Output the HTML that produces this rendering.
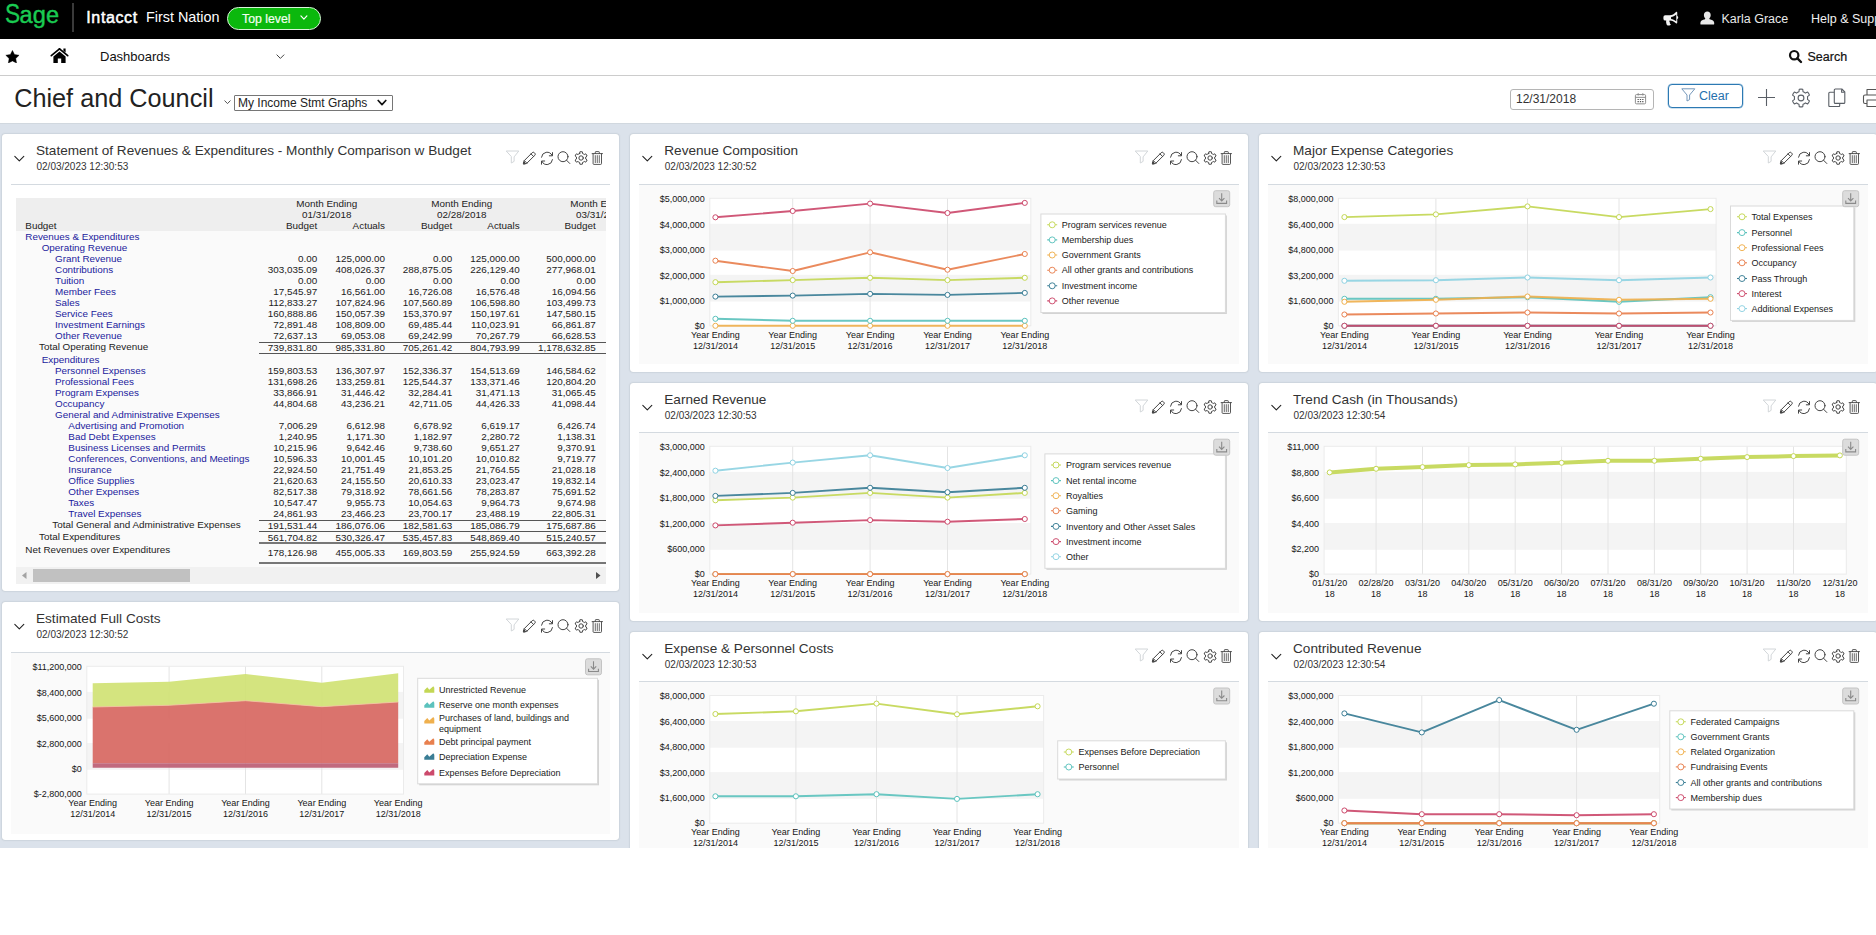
<!DOCTYPE html>
<html lang="en"><head><meta charset="utf-8"><title>Chief and Council - Dashboards</title>
<style>
*{box-sizing:border-box}
html,body{margin:0;padding:0}
body{width:1876px;height:935px;overflow:hidden;background:#fff;font-family:"Liberation Sans", Arial, sans-serif;color:#222;position:relative}
.abs{position:absolute}
#top{position:absolute;left:0;top:0;width:1876px;height:39px;background:#000;color:#fff}
#nav{position:absolute;left:0;top:39px;width:1876px;height:37px;background:#fff;border-bottom:1px solid #ccc}
#ttl{position:absolute;left:0;top:76px;width:1876px;height:47px;background:#fff}
#main{position:absolute;left:0;top:123px;width:1876px;height:725px;background:#dbe2eb;overflow:hidden;box-shadow:inset 0 1px 0 #d1d8df}
.panel{position:absolute;background:#fff;border-radius:3px;overflow:hidden;box-shadow:0 0 1.5px rgba(70,80,85,.42)}
.panel .chev{position:absolute;left:12px;top:21px}
.panel h3{position:absolute;left:34px;top:8.7px;margin:0;font-weight:400;font-size:13.6px;line-height:16px;color:#333;white-space:nowrap}
.panel .ts{position:absolute;left:34.5px;top:27px;font-size:10px;line-height:11px;color:#333;white-space:nowrap}
.panel .tools{position:absolute;right:14.3px;top:15.9px;width:99px;height:16px}
.panel .sep{position:absolute;left:9px;right:9px;top:50px;height:1px;background:#d4dae0}
.panel .body{position:absolute;left:9px;right:9px;top:51px;bottom:8px;background:#fafafa}
svg text{font-family:"Liberation Sans", Arial, sans-serif}
.tbl{position:absolute;font-size:9.9px;line-height:11px;color:#222;white-space:nowrap}
.tbl .r{position:absolute;left:0;height:11px;width:590px}
.tbl .l{position:absolute;top:0}
.tbl .v{position:absolute;top:0;text-align:right;width:80px}
.tbl a{color:#1b1b9d;text-decoration:none}
</style></head><body>
<div id="top">
<div class="abs" style="left:5px;top:-6.5px;height:40px;line-height:40px;color:#1acb52;white-space:nowrap"><span style="display:inline-block;font-size:27px;transform:scaleX(.84);transform-origin:0 50%;-webkit-text-stroke:.3px #1acb52">S</span><span style="font-size:23.5px;margin-left:-3.6px;letter-spacing:.25px;-webkit-text-stroke:.45px #1acb52">age</span></div>
<div class="abs" style="left:72px;top:3px;width:2px;height:29px;background:#3a3a3a"></div>
<div class="abs" style="left:86.3px;top:8px;font-size:16px;line-height:19px;font-weight:400;letter-spacing:.62px;-webkit-text-stroke:.5px #fff;color:#fff">Intacct</div>
<div class="abs" style="left:146px;top:9px;font-size:14.4px;line-height:17px;color:#fff">First Nation</div>
<div class="abs" style="left:227px;top:7px;width:94px;height:23px;border-radius:12px;background:#0bb80d;border:1px solid #d9f5d9"></div>
<div class="abs" style="left:242px;top:12px;font-size:12.3px;line-height:15px;color:#f2fff2;-webkit-text-stroke:.2px #f2fff2">Top level</div>
<svg class="abs" style="left:300.3px;top:14.6px" width="8" height="6" viewBox="0 0 8 6" fill="none" stroke="#fff" stroke-width="1.2" stroke-linecap="round" stroke-linejoin="round"><path d="M0.9 0.9L3.9 4.100L6.900 0.900"/></svg>
<svg class="abs" style="left:1662px;top:10.5px" width="18.4" height="16.2" viewBox="0 0 17 15" fill="#f2f2f2"><path d="M13.2 0.6c.5 0 .9.4.9.9v3.1a1.6 1.6 0 0 1 0 2.9v3.1c0 .5-.4.9-.9.9c-2-1.6-4-2.4-6-2.6c-.5.3-.6 1 .1 1.6c-.5.9.4 1.6.9 2c-.3.6-1.2.9-2 .9c-.7 0-1.3-.2-1.7-.5c-.4-1.2-1-2.4-.6-4.1H3a1.7 1.7 0 0 1-1.7-1.7V5.6A1.7 1.7 0 0 1 3 3.9h4.2c2-.2 4-1 6-3.3zM13.2 3.2c-1.600 1.300-3.200 2-4.800 2.300v1.800c1.600.3 3.200 1 4.800 2.300z" fill-rule="evenodd"/></svg>
<svg class="abs" style="left:1700px;top:11px" width="15" height="14" viewBox="0 0 15 14" fill="#e8e8e8"><path d="M7.300.4c2 0 3.400 1.500 3.400 3.500c0 1.300-.6 2.700-1.400 3.500c.1.700.6.9 1.300 1.200c1.700.6 3.400 1.200 3.600 3.200v1.200c0 .4-.3.600-.6.600H1c-.3 0-.6-.2-.6-.6v-1.200c.2-2 1.900-2.600 3.600-3.200c.7-.3 1.200-.5 1.300-1.200C4.500 6.600 3.900 5.200 3.900 3.900c0-2 1.400-3.500 3.400-3.500z"/></svg>
<div class="abs" style="left:1721.5px;top:11px;font-size:12.5px;line-height:16px;color:#e8e8e8">Karla Grace</div>
<div class="abs" style="left:1811px;top:11px;font-size:12.5px;line-height:16px;color:#f0f0f0;white-space:nowrap">Help &amp; Support</div>
</div>
<div id="nav">
<svg class="abs" style="left:5.4px;top:10.8px" width="14.9" height="13.6" viewBox="0 0 16 15"><path d="M8 .5l2.250 4.550l5.050.75l-3.650 3.550l.85 5L8 12L3.500 14.350l.85-5L.7 5.800l5.050-.75z" fill="#000" stroke="#000" stroke-width=".5" stroke-linejoin="round"/></svg>
<svg class="abs" style="left:50px;top:8px" width="19" height="17" viewBox="0 0 19 17"><path d="M9.500 1.800L1.300 8.600" stroke="#000" stroke-width="1.700" fill="none" stroke-linecap="round"/><path d="M9.500 1.800L17.700 8.600" stroke="#000" stroke-width="1.700" fill="none" stroke-linecap="round"/><path d="M9.500 4.600L3.400 9.600V16h4.400v-4.400h3.400V16h4.400V9.600z" fill="#000"/><path d="M13.400 1.400h2.200v4.200l-2.200-1.800z" fill="#000"/></svg>
<div class="abs" style="left:100px;top:10px;font-size:13px;line-height:16px;color:#111">Dashboards</div>
<svg class="abs" style="left:276px;top:15px" width="9" height="6" viewBox="0 0 9 6" fill="none" stroke="#444" stroke-width="1" stroke-linecap="round" stroke-linejoin="round"><path d="M0.9 0.9L4.400 4.400L7.900 0.900"/></svg>
<svg class="abs" style="left:1788px;top:10px" width="15" height="15" viewBox="0 0 15 15" fill="none" stroke="#111" stroke-width="2.2"><circle cx="6.2" cy="6.200" r="4.200"/><path d="M9.400 9.400L13 13" stroke-linecap="round" stroke-width="2.4"/></svg>
<div class="abs" style="left:1807.5px;top:10px;font-size:12.5px;line-height:16px;color:#111;-webkit-text-stroke:.2px #111">Search</div>
</div>
<div id="ttl">
<div class="abs" style="left:14.2px;top:7px;font-size:25.25px;line-height:30px;color:#222;white-space:nowrap">Chief and Council</div>
<svg class="abs" style="left:224.4px;top:24.3px" width="7" height="5" viewBox="0 0 7 5" fill="none" stroke="#555" stroke-width="1" stroke-linecap="round" stroke-linejoin="round"><path d="M0.8 0.8L3.5 3.600L6.200 0.800"/></svg>
<div class="abs" style="left:234px;top:19px;width:159px;height:16px;border:1px solid #767676;background:#fff;border-radius:1px"></div>
<div class="abs" style="left:238px;top:20px;font-size:12px;line-height:14px;color:#222;white-space:nowrap">My Income Stmt Graphs</div>
<svg class="abs" style="left:377px;top:23px" width="10" height="8" viewBox="0 0 10 8" fill="none" stroke="#111" stroke-width="1.700" stroke-linecap="round" stroke-linejoin="round"><path d="M1.200 1.500L5 5.600L8.800 1.500"/></svg>
<div class="abs" style="left:1510px;top:13px;width:144px;height:21px;border:1px solid #b5b5b5;border-radius:3px;background:#fff"></div>
<div class="abs" style="left:1516px;top:16px;font-size:12px;line-height:15px;color:#333">12/31/2018</div>
<svg class="abs" style="left:1634.3px;top:16px" width="13" height="13.5" viewBox="0 0 14 14" fill="none" stroke="#8b8b8b" stroke-width="1.05"><rect x="1.500" y="2.500" width="11" height="10" rx="1.200"/><path d="M1.500 5.500H12.500M4.500 1V3.500M9.500 1V3.500"/><path d="M3.800 7.800h1.400M6.300 7.800h1.400M8.800 7.800h1.400M3.800 10.200h1.400M6.300 10.200h1.400M8.800 10.200h1.400" stroke-width="1.300" stroke="#555"/></svg>
<div class="abs" style="left:1668px;top:8px;width:75px;height:24px;border:1px solid #2c79b3;border-radius:4px;background:#fff;box-shadow:0 0 0 .5px #9cc3df"></div>
<svg class="abs" style="left:1681px;top:12px" width="15" height="14" viewBox="0 0 15 14" fill="none" stroke="#7497ba" stroke-width="1" stroke-linejoin="round"><path d="M0.800 0.800H13.800L8.600 7V11.600L6 13V7Z"/></svg>
<div class="abs" style="left:1699px;top:13px;font-size:12.500px;line-height:15px;color:#2470ad">Clear</div>
<svg class="abs" style="left:1757px;top:12.3px" width="19" height="19" viewBox="0 0 19 19" stroke="#5a5f66" stroke-width="1.100"><path d="M9.500 1V18M1 9.500H18"/></svg>
<svg class="abs" style="left:1791.3px;top:11.9px" width="20" height="20" viewBox="-10 -10 20 20" fill="none" stroke="#5a5f66" stroke-width="1.100" stroke-linejoin="round"><path d="M-2.04 -6.28L-1.76 -8.72A8.9 8.9 0 0 1 1.76 -8.72L2.04 -6.28A6.6 6.6 0 0 1 4.42 -4.90L4.42 -4.90L6.68 -5.89A8.9 8.9 0 0 1 8.44 -2.84L6.46 -1.37A6.6 6.6 0 0 1 6.46 1.37L6.46 1.37L8.44 2.84A8.9 8.9 0 0 1 6.68 5.89L4.42 4.90A6.6 6.6 0 0 1 2.04 6.28L2.04 6.28L1.76 8.72A8.9 8.9 0 0 1 -1.76 8.72L-2.04 6.28A6.6 6.6 0 0 1 -4.42 4.90L-4.42 4.90L-6.68 5.89A8.9 8.9 0 0 1 -8.44 2.84L-6.46 1.37A6.6 6.6 0 0 1 -6.46 -1.37L-6.46 -1.37L-8.44 -2.84A8.9 8.9 0 0 1 -6.68 -5.89L-4.42 -4.90A6.6 6.6 0 0 1 -2.04 -6.28Z"/><circle cx="0" cy="0" r="2.9"/></svg>
<svg class="abs" style="left:1827px;top:11px" width="19" height="20" viewBox="0 0 19 20" fill="none" stroke="#5a5f66" stroke-width="1.100" stroke-linejoin="round"><path d="M7.300 5V15.400a1 1 0 0 0 1 1H16.800a1 1 0 0 0 1-1V5L14.800 2H8.300a1 1 0 0 0-1 1Z"/><path d="M14.600 2.200V5.200H17.600"/><path d="M7.300 5.200H2.800a1 1 0 0 0-1 1V18.600a1 1 0 0 0 1 1H11.700a1 1 0 0 0 1-1V16.600"/></svg>
<svg class="abs" style="left:1862px;top:12px" width="20" height="20" viewBox="0 0 20 20" fill="none" stroke="#555" stroke-width="1.100" stroke-linejoin="round"><path d="M5 7V1.500H17V7"/><rect x="1.500" y="7" width="19" height="8.500" rx="1.500"/><rect x="5" y="12" width="12" height="6.500" fill="#fff"/></svg>
</div>
<div id="main">
<div class="panel" style="left:2px;top:11px;width:617.3px;height:457px"><svg class="chev" width="11" height="7" viewBox="0 0 11 7" fill="none" stroke="#222" stroke-width="1.1" stroke-linecap="round" stroke-linejoin="round"><path d="M0.800 1.400L5.300 5.900L9.800 1.400"/></svg><h3>Statement of Revenues &amp; Expenditures - Monthly Comparison w Budget</h3><div class="ts">02/03/2023 12:30:53</div><svg class="tools" viewBox="0 0 99 16" width="99" height="16" fill="none" stroke="#444" stroke-width="1" stroke-linecap="round" stroke-linejoin="round"><path d="M0.6 1H12.8L8.1 6.9V11.4L5.3 13V6.9Z" stroke="#d2d6d9"/><g transform="translate(17,1.5)"><path d="M0.7 12.3L1.3 9.1L9.2 1.2a1.5 1.5 0 0 1 2.1 0l0.5 0.5a1.5 1.5 0 0 1 0 2.1L3.9 11.7Z"/><path d="M1.3 9.1L3.9 11.7M8 2.4L10.600 5" /><path d="M0.7 12.3L2.5 12L1 10.500Z" fill="#444"/></g><g transform="translate(34.5,2)"><path d="M1 5.2A5.600 5.600 0 0 1 11.600 3.400"/><path d="M12 0.600V3.800H8.800"/><path d="M12 7.600A5.600 5.600 0 0 1 1.400 9.400"/><path d="M1 12.200V9H4.200"/></g><g transform="translate(51.3,1)"><circle cx="5.700" cy="5.700" r="5"/><path d="M9.300 9.300L12.500 12.500"/></g><g transform="translate(75.1,8)"><path d="M-1.45 -4.47L-1.25 -6.18A6.3 6.3 0 0 1 1.25 -6.18L1.45 -4.47A4.7 4.7 0 0 1 3.14 -3.49L3.14 -3.49L4.73 -4.17A6.3 6.3 0 0 1 5.97 -2.01L4.60 -0.98A4.7 4.7 0 0 1 4.60 0.98L4.60 0.98L5.97 2.01A6.3 6.3 0 0 1 4.73 4.17L3.14 3.49A4.7 4.7 0 0 1 1.45 4.47L1.45 4.47L1.25 6.18A6.3 6.3 0 0 1 -1.25 6.18L-1.45 4.47A4.7 4.7 0 0 1 -3.14 3.49L-3.14 3.49L-4.73 4.17A6.3 6.3 0 0 1 -5.97 2.01L-4.60 0.98A4.7 4.7 0 0 1 -4.60 -0.98L-4.60 -0.98L-5.97 -2.01A6.3 6.3 0 0 1 -4.73 -4.17L-3.14 -3.49A4.7 4.7 0 0 1 -1.45 -4.47Z"/><circle cx="0" cy="0" r="2.2"/></g><g transform="translate(85.7,1)" stroke-width="0.9"><path d="M0.400 2.600H10.800M3.600 2.400V1.200a0.600 0.600 0 0 1 .6-.6H7a0.600 0.600 0 0 1 .6 .6V2.400"/><path d="M1.400 2.800V12.600a0.800 0.800 0 0 0 .8 .8H9a0.800 0.800 0 0 0 .8-.8V2.800"/><path d="M3.600 4.600V11.600M5.600 4.600V11.600M7.600 4.600V11.600" stroke-width="0.8"/></g></svg><div class="sep" style="top:50px"></div><div class="tbl" style="left:14px;top:64px;width:590px;height:369px;background:#fafafa;overflow:hidden"><div class="abs" style="left:0;top:0;width:590px;height:33px;background:#eee"></div><div class="abs" style="top:-0.5px;left:270.7px;width:80px;text-align:center;height:11px">Month Ending</div><div class="abs" style="top:10.5px;left:270.7px;width:80px;text-align:center;height:11px">01/31/2018</div><div class="abs" style="top:-0.5px;left:405.7px;width:80px;text-align:center;height:11px">Month Ending</div><div class="abs" style="top:10.5px;left:405.7px;width:80px;text-align:center;height:11px">02/28/2018</div><div class="abs" style="top:-0.5px;left:554.3px;height:11px">Month Ending</div><div class="abs" style="top:10.5px;left:560.0px;height:11px">03/31/2018</div><div class="abs" style="top:21.5px;left:9.3px;height:11px">Budget</div><div class="abs" style="top:21.5px;left:221.3px;width:80px;text-align:right;height:11px">Budget</div><div class="abs" style="top:21.5px;left:289.0px;width:80px;text-align:right;height:11px">Actuals</div><div class="abs" style="top:21.5px;left:356.3px;width:80px;text-align:right;height:11px">Budget</div><div class="abs" style="top:21.5px;left:423.7px;width:80px;text-align:right;height:11px">Actuals</div><div class="abs" style="top:21.5px;left:499.7px;width:80px;text-align:right;height:11px">Budget</div><div class="abs" style="top:32.8px;left:9.3px;height:11px"><a>Revenues &amp; Expenditures</a></div><div class="abs" style="top:43.8px;left:25.7px;height:11px"><a>Operating Revenue</a></div><div class="abs" style="top:54.8px;left:39.0px;height:11px"><a>Grant Revenue</a></div><div class="abs" style="top:54.8px;left:221.3px;width:80px;text-align:right;height:11px">0.00</div><div class="abs" style="top:54.8px;left:289.0px;width:80px;text-align:right;height:11px">125,000.00</div><div class="abs" style="top:54.8px;left:356.3px;width:80px;text-align:right;height:11px">0.00</div><div class="abs" style="top:54.8px;left:423.7px;width:80px;text-align:right;height:11px">125,000.00</div><div class="abs" style="top:54.8px;left:499.7px;width:80px;text-align:right;height:11px">500,000.00</div><div class="abs" style="top:65.8px;left:39.0px;height:11px"><a>Contributions</a></div><div class="abs" style="top:65.8px;left:221.3px;width:80px;text-align:right;height:11px">303,035.09</div><div class="abs" style="top:65.8px;left:289.0px;width:80px;text-align:right;height:11px">408,026.37</div><div class="abs" style="top:65.8px;left:356.3px;width:80px;text-align:right;height:11px">288,875.05</div><div class="abs" style="top:65.8px;left:423.7px;width:80px;text-align:right;height:11px">226,129.40</div><div class="abs" style="top:65.8px;left:499.7px;width:80px;text-align:right;height:11px">277,968.01</div><div class="abs" style="top:76.8px;left:39.0px;height:11px"><a>Tuition</a></div><div class="abs" style="top:76.8px;left:221.3px;width:80px;text-align:right;height:11px">0.00</div><div class="abs" style="top:76.8px;left:289.0px;width:80px;text-align:right;height:11px">0.00</div><div class="abs" style="top:76.8px;left:356.3px;width:80px;text-align:right;height:11px">0.00</div><div class="abs" style="top:76.8px;left:423.7px;width:80px;text-align:right;height:11px">0.00</div><div class="abs" style="top:76.8px;left:499.7px;width:80px;text-align:right;height:11px">0.00</div><div class="abs" style="top:87.8px;left:39.0px;height:11px"><a>Member Fees</a></div><div class="abs" style="top:87.8px;left:221.3px;width:80px;text-align:right;height:11px">17,545.97</div><div class="abs" style="top:87.8px;left:289.0px;width:80px;text-align:right;height:11px">16,561.00</div><div class="abs" style="top:87.8px;left:356.3px;width:80px;text-align:right;height:11px">16,726.08</div><div class="abs" style="top:87.8px;left:423.7px;width:80px;text-align:right;height:11px">16,576.48</div><div class="abs" style="top:87.8px;left:499.7px;width:80px;text-align:right;height:11px">16,094.56</div><div class="abs" style="top:98.8px;left:39.0px;height:11px"><a>Sales</a></div><div class="abs" style="top:98.8px;left:221.3px;width:80px;text-align:right;height:11px">112,833.27</div><div class="abs" style="top:98.8px;left:289.0px;width:80px;text-align:right;height:11px">107,824.96</div><div class="abs" style="top:98.8px;left:356.3px;width:80px;text-align:right;height:11px">107,560.89</div><div class="abs" style="top:98.8px;left:423.7px;width:80px;text-align:right;height:11px">106,598.80</div><div class="abs" style="top:98.8px;left:499.7px;width:80px;text-align:right;height:11px">103,499.73</div><div class="abs" style="top:109.8px;left:39.0px;height:11px"><a>Service Fees</a></div><div class="abs" style="top:109.8px;left:221.3px;width:80px;text-align:right;height:11px">160,888.86</div><div class="abs" style="top:109.8px;left:289.0px;width:80px;text-align:right;height:11px">150,057.39</div><div class="abs" style="top:109.8px;left:356.3px;width:80px;text-align:right;height:11px">153,370.97</div><div class="abs" style="top:109.8px;left:423.7px;width:80px;text-align:right;height:11px">150,197.61</div><div class="abs" style="top:109.8px;left:499.7px;width:80px;text-align:right;height:11px">147,580.15</div><div class="abs" style="top:120.8px;left:39.0px;height:11px"><a>Investment Earnings</a></div><div class="abs" style="top:120.8px;left:221.3px;width:80px;text-align:right;height:11px">72,891.48</div><div class="abs" style="top:120.8px;left:289.0px;width:80px;text-align:right;height:11px">108,809.00</div><div class="abs" style="top:120.8px;left:356.3px;width:80px;text-align:right;height:11px">69,485.44</div><div class="abs" style="top:120.8px;left:423.7px;width:80px;text-align:right;height:11px">110,023.91</div><div class="abs" style="top:120.8px;left:499.7px;width:80px;text-align:right;height:11px">66,861.87</div><div class="abs" style="top:131.8px;left:39.0px;height:11px"><a>Other Revenue</a></div><div class="abs" style="top:131.8px;left:221.3px;width:80px;text-align:right;height:11px">72,637.13</div><div class="abs" style="top:131.8px;left:289.0px;width:80px;text-align:right;height:11px">69,053.08</div><div class="abs" style="top:131.8px;left:356.3px;width:80px;text-align:right;height:11px">69,242.99</div><div class="abs" style="top:131.8px;left:423.7px;width:80px;text-align:right;height:11px">70,267.79</div><div class="abs" style="top:131.8px;left:499.7px;width:80px;text-align:right;height:11px">66,628.53</div><div class="abs" style="top:142.8px;left:23.0px;height:11px">Total Operating Revenue</div><div class="abs" style="top:143.5px;left:221.3px;width:80px;text-align:right;height:11px">739,831.80</div><div class="abs" style="top:143.5px;left:289.0px;width:80px;text-align:right;height:11px">985,331.80</div><div class="abs" style="top:143.5px;left:356.3px;width:80px;text-align:right;height:11px">705,261.42</div><div class="abs" style="top:143.5px;left:423.7px;width:80px;text-align:right;height:11px">804,793.99</div><div class="abs" style="top:143.5px;left:499.7px;width:80px;text-align:right;height:11px">1,178,632.85</div><div class="abs" style="top:155.8px;left:25.7px;height:11px"><a>Expenditures</a></div><div class="abs" style="top:166.8px;left:39.0px;height:11px"><a>Personnel Expenses</a></div><div class="abs" style="top:166.8px;left:221.3px;width:80px;text-align:right;height:11px">159,803.53</div><div class="abs" style="top:166.8px;left:289.0px;width:80px;text-align:right;height:11px">136,307.97</div><div class="abs" style="top:166.8px;left:356.3px;width:80px;text-align:right;height:11px">152,336.37</div><div class="abs" style="top:166.8px;left:423.7px;width:80px;text-align:right;height:11px">154,513.69</div><div class="abs" style="top:166.8px;left:499.7px;width:80px;text-align:right;height:11px">146,584.62</div><div class="abs" style="top:177.8px;left:39.0px;height:11px"><a>Professional Fees</a></div><div class="abs" style="top:177.8px;left:221.3px;width:80px;text-align:right;height:11px">131,698.26</div><div class="abs" style="top:177.8px;left:289.0px;width:80px;text-align:right;height:11px">133,259.81</div><div class="abs" style="top:177.8px;left:356.3px;width:80px;text-align:right;height:11px">125,544.37</div><div class="abs" style="top:177.8px;left:423.7px;width:80px;text-align:right;height:11px">133,371.46</div><div class="abs" style="top:177.8px;left:499.7px;width:80px;text-align:right;height:11px">120,804.20</div><div class="abs" style="top:188.8px;left:39.0px;height:11px"><a>Program Expenses</a></div><div class="abs" style="top:188.8px;left:221.3px;width:80px;text-align:right;height:11px">33,866.91</div><div class="abs" style="top:188.8px;left:289.0px;width:80px;text-align:right;height:11px">31,446.42</div><div class="abs" style="top:188.8px;left:356.3px;width:80px;text-align:right;height:11px">32,284.41</div><div class="abs" style="top:188.8px;left:423.7px;width:80px;text-align:right;height:11px">31,471.13</div><div class="abs" style="top:188.8px;left:499.7px;width:80px;text-align:right;height:11px">31,065.45</div><div class="abs" style="top:199.8px;left:39.0px;height:11px"><a>Occupancy</a></div><div class="abs" style="top:199.8px;left:221.3px;width:80px;text-align:right;height:11px">44,804.68</div><div class="abs" style="top:199.8px;left:289.0px;width:80px;text-align:right;height:11px">43,236.21</div><div class="abs" style="top:199.8px;left:356.3px;width:80px;text-align:right;height:11px">42,711.05</div><div class="abs" style="top:199.8px;left:423.7px;width:80px;text-align:right;height:11px">44,426.33</div><div class="abs" style="top:199.8px;left:499.7px;width:80px;text-align:right;height:11px">41,098.44</div><div class="abs" style="top:210.8px;left:39.0px;height:11px"><a>General and Administrative Expenses</a></div><div class="abs" style="top:221.8px;left:52.3px;height:11px"><a>Advertising and Promotion</a></div><div class="abs" style="top:221.8px;left:221.3px;width:80px;text-align:right;height:11px">7,006.29</div><div class="abs" style="top:221.8px;left:289.0px;width:80px;text-align:right;height:11px">6,612.98</div><div class="abs" style="top:221.8px;left:356.3px;width:80px;text-align:right;height:11px">6,678.92</div><div class="abs" style="top:221.8px;left:423.7px;width:80px;text-align:right;height:11px">6,619.17</div><div class="abs" style="top:221.8px;left:499.7px;width:80px;text-align:right;height:11px">6,426.74</div><div class="abs" style="top:232.8px;left:52.3px;height:11px"><a>Bad Debt Expenses</a></div><div class="abs" style="top:232.8px;left:221.3px;width:80px;text-align:right;height:11px">1,240.95</div><div class="abs" style="top:232.8px;left:289.0px;width:80px;text-align:right;height:11px">1,171.30</div><div class="abs" style="top:232.8px;left:356.3px;width:80px;text-align:right;height:11px">1,182.97</div><div class="abs" style="top:232.8px;left:423.7px;width:80px;text-align:right;height:11px">2,280.72</div><div class="abs" style="top:232.8px;left:499.7px;width:80px;text-align:right;height:11px">1,138.31</div><div class="abs" style="top:243.8px;left:52.3px;height:11px"><a>Business Licenses and Permits</a></div><div class="abs" style="top:243.8px;left:221.3px;width:80px;text-align:right;height:11px">10,215.96</div><div class="abs" style="top:243.8px;left:289.0px;width:80px;text-align:right;height:11px">9,642.46</div><div class="abs" style="top:243.8px;left:356.3px;width:80px;text-align:right;height:11px">9,738.60</div><div class="abs" style="top:243.8px;left:423.7px;width:80px;text-align:right;height:11px">9,651.27</div><div class="abs" style="top:243.8px;left:499.7px;width:80px;text-align:right;height:11px">9,370.91</div><div class="abs" style="top:254.8px;left:52.3px;height:11px"><a>Conferences, Conventions, and Meetings</a></div><div class="abs" style="top:254.8px;left:221.3px;width:80px;text-align:right;height:11px">10,596.33</div><div class="abs" style="top:254.8px;left:289.0px;width:80px;text-align:right;height:11px">10,001.45</div><div class="abs" style="top:254.8px;left:356.3px;width:80px;text-align:right;height:11px">10,101.20</div><div class="abs" style="top:254.8px;left:423.7px;width:80px;text-align:right;height:11px">10,010.82</div><div class="abs" style="top:254.8px;left:499.7px;width:80px;text-align:right;height:11px">9,719.77</div><div class="abs" style="top:265.8px;left:52.3px;height:11px"><a>Insurance</a></div><div class="abs" style="top:265.8px;left:221.3px;width:80px;text-align:right;height:11px">22,924.50</div><div class="abs" style="top:265.8px;left:289.0px;width:80px;text-align:right;height:11px">21,751.49</div><div class="abs" style="top:265.8px;left:356.3px;width:80px;text-align:right;height:11px">21,853.25</div><div class="abs" style="top:265.8px;left:423.7px;width:80px;text-align:right;height:11px">21,764.55</div><div class="abs" style="top:265.8px;left:499.7px;width:80px;text-align:right;height:11px">21,028.18</div><div class="abs" style="top:276.8px;left:52.3px;height:11px"><a>Office Supplies</a></div><div class="abs" style="top:276.8px;left:221.3px;width:80px;text-align:right;height:11px">21,620.63</div><div class="abs" style="top:276.8px;left:289.0px;width:80px;text-align:right;height:11px">24,155.50</div><div class="abs" style="top:276.8px;left:356.3px;width:80px;text-align:right;height:11px">20,610.33</div><div class="abs" style="top:276.8px;left:423.7px;width:80px;text-align:right;height:11px">23,023.47</div><div class="abs" style="top:276.8px;left:499.7px;width:80px;text-align:right;height:11px">19,832.14</div><div class="abs" style="top:287.8px;left:52.3px;height:11px"><a>Other Expenses</a></div><div class="abs" style="top:287.8px;left:221.3px;width:80px;text-align:right;height:11px">82,517.38</div><div class="abs" style="top:287.8px;left:289.0px;width:80px;text-align:right;height:11px">79,318.92</div><div class="abs" style="top:287.8px;left:356.3px;width:80px;text-align:right;height:11px">78,661.56</div><div class="abs" style="top:287.8px;left:423.7px;width:80px;text-align:right;height:11px">78,283.87</div><div class="abs" style="top:287.8px;left:499.7px;width:80px;text-align:right;height:11px">75,691.52</div><div class="abs" style="top:298.8px;left:52.3px;height:11px"><a>Taxes</a></div><div class="abs" style="top:298.8px;left:221.3px;width:80px;text-align:right;height:11px">10,547.47</div><div class="abs" style="top:298.8px;left:289.0px;width:80px;text-align:right;height:11px">9,955.73</div><div class="abs" style="top:298.8px;left:356.3px;width:80px;text-align:right;height:11px">10,054.63</div><div class="abs" style="top:298.8px;left:423.7px;width:80px;text-align:right;height:11px">9,964.73</div><div class="abs" style="top:298.8px;left:499.7px;width:80px;text-align:right;height:11px">9,674.98</div><div class="abs" style="top:309.8px;left:52.3px;height:11px"><a>Travel Expenses</a></div><div class="abs" style="top:309.8px;left:221.3px;width:80px;text-align:right;height:11px">24,861.93</div><div class="abs" style="top:309.8px;left:289.0px;width:80px;text-align:right;height:11px">23,466.23</div><div class="abs" style="top:309.8px;left:356.3px;width:80px;text-align:right;height:11px">23,700.17</div><div class="abs" style="top:309.8px;left:423.7px;width:80px;text-align:right;height:11px">23,488.19</div><div class="abs" style="top:309.8px;left:499.7px;width:80px;text-align:right;height:11px">22,805.31</div><div class="abs" style="top:320.8px;left:36.3px;height:11px">Total General and Administrative Expenses</div><div class="abs" style="top:321.5px;left:221.3px;width:80px;text-align:right;height:11px">191,531.44</div><div class="abs" style="top:321.5px;left:289.0px;width:80px;text-align:right;height:11px">186,076.06</div><div class="abs" style="top:321.5px;left:356.3px;width:80px;text-align:right;height:11px">182,581.63</div><div class="abs" style="top:321.5px;left:423.7px;width:80px;text-align:right;height:11px">185,086.79</div><div class="abs" style="top:321.5px;left:499.7px;width:80px;text-align:right;height:11px">175,687.86</div><div class="abs" style="top:332.8px;left:23.0px;height:11px">Total Expenditures</div><div class="abs" style="top:333.8px;left:221.3px;width:80px;text-align:right;height:11px">561,704.82</div><div class="abs" style="top:333.8px;left:289.0px;width:80px;text-align:right;height:11px">530,326.47</div><div class="abs" style="top:333.8px;left:356.3px;width:80px;text-align:right;height:11px">535,457.83</div><div class="abs" style="top:333.8px;left:423.7px;width:80px;text-align:right;height:11px">548,869.40</div><div class="abs" style="top:333.8px;left:499.7px;width:80px;text-align:right;height:11px">515,240.57</div><div class="abs" style="top:345.8px;left:9.3px;height:11px">Net Revenues over Expenditures</div><div class="abs" style="top:349.0px;left:221.3px;width:80px;text-align:right;height:11px">178,126.98</div><div class="abs" style="top:349.0px;left:289.0px;width:80px;text-align:right;height:11px">455,005.33</div><div class="abs" style="top:349.0px;left:356.3px;width:80px;text-align:right;height:11px">169,803.59</div><div class="abs" style="top:349.0px;left:423.7px;width:80px;text-align:right;height:11px">255,924.59</div><div class="abs" style="top:349.0px;left:499.7px;width:80px;text-align:right;height:11px">663,392.28</div><div class="abs" style="left:243.3px;top:144.0px;width:347px;height:1px;background:#555"></div><div class="abs" style="left:243.3px;top:155.0px;width:347px;height:1px;background:#555"></div><div class="abs" style="left:243.3px;top:322.0px;width:347px;height:1px;background:#555"></div><div class="abs" style="left:243.3px;top:333.0px;width:347px;height:1px;background:#555"></div><div class="abs" style="left:243.3px;top:344.4px;width:347px;height:1.8px;background:#777"></div><div class="abs" style="left:243.3px;top:364.0px;width:347px;height:1.8px;background:#777"></div></div><div class="abs" style="left:14px;top:433px;width:590px;height:17px;background:#f1f1f1"><div class="abs" style="left:17px;top:2px;width:157px;height:13px;background:#c1c1c1"></div><svg class="abs" style="left:0;top:0" width="590" height="17"><path d="M10.5 5V12L6 8.5Z" fill="#a3a3a3"/><path d="M580 5V12L584.5 8.5Z" fill="#505050"/></svg></div></div>
<div class="panel" style="left:2px;top:479px;width:617.3px;height:237.5px"><svg class="chev" width="11" height="7" viewBox="0 0 11 7" fill="none" stroke="#222" stroke-width="1.1" stroke-linecap="round" stroke-linejoin="round"><path d="M0.800 1.400L5.300 5.900L9.800 1.400"/></svg><h3>Estimated Full Costs</h3><div class="ts">02/03/2023 12:30:52</div><svg class="tools" viewBox="0 0 99 16" width="99" height="16" fill="none" stroke="#444" stroke-width="1" stroke-linecap="round" stroke-linejoin="round"><path d="M0.6 1H12.8L8.1 6.9V11.4L5.3 13V6.9Z" stroke="#d2d6d9"/><g transform="translate(17,1.5)"><path d="M0.7 12.3L1.3 9.1L9.2 1.2a1.5 1.5 0 0 1 2.1 0l0.5 0.5a1.5 1.5 0 0 1 0 2.1L3.9 11.7Z"/><path d="M1.3 9.1L3.9 11.7M8 2.4L10.600 5" /><path d="M0.7 12.3L2.5 12L1 10.500Z" fill="#444"/></g><g transform="translate(34.5,2)"><path d="M1 5.2A5.600 5.600 0 0 1 11.600 3.400"/><path d="M12 0.600V3.800H8.800"/><path d="M12 7.600A5.600 5.600 0 0 1 1.400 9.400"/><path d="M1 12.200V9H4.200"/></g><g transform="translate(51.3,1)"><circle cx="5.700" cy="5.700" r="5"/><path d="M9.300 9.300L12.500 12.500"/></g><g transform="translate(75.1,8)"><path d="M-1.45 -4.47L-1.25 -6.18A6.3 6.3 0 0 1 1.25 -6.18L1.45 -4.47A4.7 4.7 0 0 1 3.14 -3.49L3.14 -3.49L4.73 -4.17A6.3 6.3 0 0 1 5.97 -2.01L4.60 -0.98A4.7 4.7 0 0 1 4.60 0.98L4.60 0.98L5.97 2.01A6.3 6.3 0 0 1 4.73 4.17L3.14 3.49A4.7 4.7 0 0 1 1.45 4.47L1.45 4.47L1.25 6.18A6.3 6.3 0 0 1 -1.25 6.18L-1.45 4.47A4.7 4.7 0 0 1 -3.14 3.49L-3.14 3.49L-4.73 4.17A6.3 6.3 0 0 1 -5.97 2.01L-4.60 0.98A4.7 4.7 0 0 1 -4.60 -0.98L-4.60 -0.98L-5.97 -2.01A6.3 6.3 0 0 1 -4.73 -4.17L-3.14 -3.49A4.7 4.7 0 0 1 -1.45 -4.47Z"/><circle cx="0" cy="0" r="2.2"/></g><g transform="translate(85.7,1)" stroke-width="0.9"><path d="M0.400 2.600H10.800M3.600 2.400V1.200a0.600 0.600 0 0 1 .6-.6H7a0.600 0.600 0 0 1 .6 .6V2.400"/><path d="M1.400 2.800V12.600a0.800 0.800 0 0 0 .8 .8H9a0.800 0.800 0 0 0 .8-.8V2.800"/><path d="M3.600 4.600V11.600M5.600 4.600V11.600M7.600 4.600V11.600" stroke-width="0.8"/></g></svg><div class="sep" style="top:50px"></div><div class="body" style="top:51px;bottom:5.5px"></div><svg class="abs" style="left:0;top:0" width="617" height="239" viewBox="0 0 617 239"><rect x="84.8" y="64.3" width="316.7" height="127.8" fill="#fff"/><rect x="84.8" y="89.9" width="316.7" height="26.8" fill="#f4f4f4"/><rect x="84.8" y="141.0" width="316.7" height="26.8" fill="#f4f4f4"/><line x1="167.1" y1="64.3" x2="167.1" y2="192.1" stroke="#e4e4e4" stroke-width="1"/><line x1="243.5" y1="64.3" x2="243.5" y2="192.1" stroke="#e4e4e4" stroke-width="1"/><line x1="319.8" y1="64.3" x2="319.8" y2="192.1" stroke="#e4e4e4" stroke-width="1"/><rect x="84.8" y="64.3" width="316.7" height="127.8" fill="none" stroke="#ebebeb" stroke-width="1"/><text x="79.8" y="68.0" font-size="9" text-anchor="end" fill="#161616">$11,200,000</text><text x="79.8" y="94.0" font-size="9" text-anchor="end" fill="#161616">$8,400,000</text><text x="79.8" y="119.0" font-size="9" text-anchor="end" fill="#161616">$5,600,000</text><text x="79.8" y="145.0" font-size="9" text-anchor="end" fill="#161616">$2,800,000</text><text x="79.8" y="170.0" font-size="9" text-anchor="end" fill="#161616">$0</text><text x="79.8" y="195.0" font-size="9" text-anchor="end" fill="#161616">$-2,800,000</text><text x="90.7" y="204.0" font-size="9" text-anchor="middle" fill="#161616">Year Ending</text><text x="90.7" y="215.0" font-size="9" text-anchor="middle" fill="#161616">12/31/2014</text><text x="167.1" y="204.0" font-size="9" text-anchor="middle" fill="#161616">Year Ending</text><text x="167.1" y="215.0" font-size="9" text-anchor="middle" fill="#161616">12/31/2015</text><text x="243.5" y="204.0" font-size="9" text-anchor="middle" fill="#161616">Year Ending</text><text x="243.5" y="215.0" font-size="9" text-anchor="middle" fill="#161616">12/31/2016</text><text x="319.8" y="204.0" font-size="9" text-anchor="middle" fill="#161616">Year Ending</text><text x="319.8" y="215.0" font-size="9" text-anchor="middle" fill="#161616">12/31/2017</text><text x="396.2" y="204.0" font-size="9" text-anchor="middle" fill="#161616">Year Ending</text><text x="396.2" y="215.0" font-size="9" text-anchor="middle" fill="#161616">12/31/2018</text><polygon points="90.7,81.3 167.1,79.7 243.5,72.0 319.8,80.7 396.2,71.3 396.2,100.0 319.8,104.7 243.5,98.7 167.1,103.3 90.7,105.0" fill="#d1e275" fill-opacity="0.93"/><polygon points="90.7,105.0 167.1,103.3 243.5,98.7 319.8,104.7 396.2,100.0 396.2,161.3 319.8,161.3 243.5,161.3 167.1,161.3 90.7,161.3" fill="#d86c65" fill-opacity="0.95"/><polygon points="90.7,161.3 167.1,161.3 243.5,161.3 319.8,161.3 396.2,161.3 396.2,165.8 90.7,165.8" fill="#be6277" fill-opacity="0.95"/><polyline points="90.7,105.0 167.1,103.3 243.5,98.7 319.8,104.7 396.2,100.0" fill="none" stroke="#f2c9a0" stroke-width="0.8"/><rect x="417.2" y="77.8" width="179.8" height="105.5" fill="#d3d3d3"/><rect x="415.7" y="76.3" width="179.8" height="105.5" fill="#fff" stroke="#dadada" stroke-width="1"/><path d="M422.3 90.7L422.3 88.2L425.3 85.2L427.3 87.7L431.3 84.2L432.3 85.7L432.3 90.7Z" fill="#c3d755"/><text x="437.0" y="90.9" font-size="9" fill="#1a1a1a">Unrestricted Revenue</text><path d="M422.3 105.7L422.3 103.2L425.3 100.2L427.3 102.7L431.3 99.2L432.3 100.7L432.3 105.7Z" fill="#5cc2bd"/><text x="437.0" y="105.9" font-size="9" fill="#1a1a1a">Reserve one month expenses</text><path d="M422.3 121.4L422.3 118.9L425.3 115.9L427.3 118.4L431.3 114.9L432.3 116.4L432.3 121.4Z" fill="#efb04e"/><text x="437.0" y="119.1" font-size="9" fill="#1a1a1a">Purchases of land, buildings and</text><text x="437.0" y="129.8" font-size="9" fill="#1a1a1a">equipment</text><path d="M422.3 142.8L422.3 140.3L425.3 137.3L427.3 139.8L431.3 136.3L432.3 137.8L432.3 142.8Z" fill="#e8804f"/><text x="437.0" y="143.0" font-size="9" fill="#1a1a1a">Debt principal payment</text><path d="M422.3 157.8L422.3 155.3L425.3 152.3L427.3 154.8L431.3 151.3L432.3 152.8L432.3 157.8Z" fill="#3a7d95"/><text x="437.0" y="158.0" font-size="9" fill="#1a1a1a">Depreciation Expense</text><path d="M422.3 173.4L422.3 170.9L425.3 167.9L427.3 170.4L431.3 166.9L432.3 168.4L432.3 173.4Z" fill="#cc4a6c"/><text x="437.0" y="173.6" font-size="9" fill="#1a1a1a">Expenses Before Depreciation</text><g transform="translate(583.0,56.3)"><rect x="0.5" y="0.5" width="16" height="16" rx="2" fill="#dcdcdc" stroke="#c4c4c4"/><path d="M8.5 3V10.4M5.8 8L8.5 10.8L11.2 8" fill="none" stroke="#8a8a8a" stroke-width="1.1"/><path d="M3.6 10.4V13.2H13.4V10.4" fill="none" stroke="#8a8a8a" stroke-width="1.1"/></g></svg></div>
<div class="panel" style="left:630.3px;top:11px;width:617.7px;height:237.7px"><svg class="chev" width="11" height="7" viewBox="0 0 11 7" fill="none" stroke="#222" stroke-width="1.1" stroke-linecap="round" stroke-linejoin="round"><path d="M0.800 1.400L5.300 5.900L9.800 1.400"/></svg><h3>Revenue Composition</h3><div class="ts">02/03/2023 12:30:52</div><svg class="tools" viewBox="0 0 99 16" width="99" height="16" fill="none" stroke="#444" stroke-width="1" stroke-linecap="round" stroke-linejoin="round"><path d="M0.6 1H12.8L8.1 6.9V11.4L5.3 13V6.9Z" stroke="#d2d6d9"/><g transform="translate(17,1.5)"><path d="M0.7 12.3L1.3 9.1L9.2 1.2a1.5 1.5 0 0 1 2.1 0l0.5 0.5a1.5 1.5 0 0 1 0 2.1L3.9 11.7Z"/><path d="M1.3 9.1L3.9 11.7M8 2.4L10.600 5" /><path d="M0.7 12.3L2.5 12L1 10.500Z" fill="#444"/></g><g transform="translate(34.5,2)"><path d="M1 5.2A5.600 5.600 0 0 1 11.600 3.400"/><path d="M12 0.600V3.800H8.800"/><path d="M12 7.600A5.600 5.600 0 0 1 1.400 9.400"/><path d="M1 12.200V9H4.200"/></g><g transform="translate(51.3,1)"><circle cx="5.700" cy="5.700" r="5"/><path d="M9.300 9.300L12.500 12.500"/></g><g transform="translate(75.1,8)"><path d="M-1.45 -4.47L-1.25 -6.18A6.3 6.3 0 0 1 1.25 -6.18L1.45 -4.47A4.7 4.7 0 0 1 3.14 -3.49L3.14 -3.49L4.73 -4.17A6.3 6.3 0 0 1 5.97 -2.01L4.60 -0.98A4.7 4.7 0 0 1 4.60 0.98L4.60 0.98L5.97 2.01A6.3 6.3 0 0 1 4.73 4.17L3.14 3.49A4.7 4.7 0 0 1 1.45 4.47L1.45 4.47L1.25 6.18A6.3 6.3 0 0 1 -1.25 6.18L-1.45 4.47A4.7 4.7 0 0 1 -3.14 3.49L-3.14 3.49L-4.73 4.17A6.3 6.3 0 0 1 -5.97 2.01L-4.60 0.98A4.7 4.7 0 0 1 -4.60 -0.98L-4.60 -0.98L-5.97 -2.01A6.3 6.3 0 0 1 -4.73 -4.17L-3.14 -3.49A4.7 4.7 0 0 1 -1.45 -4.47Z"/><circle cx="0" cy="0" r="2.2"/></g><g transform="translate(85.7,1)" stroke-width="0.9"><path d="M0.400 2.600H10.800M3.600 2.400V1.200a0.600 0.600 0 0 1 .6-.6H7a0.600 0.600 0 0 1 .6 .6V2.400"/><path d="M1.400 2.800V12.600a0.800 0.800 0 0 0 .8 .8H9a0.800 0.800 0 0 0 .8-.8V2.800"/><path d="M3.600 4.600V11.600M5.600 4.600V11.600M7.600 4.600V11.600" stroke-width="0.8"/></g></svg><div class="sep" style="top:50px"></div><div class="body" style="top:51px;bottom:7.5px"></div><svg class="abs" style="left:0;top:0" width="618" height="239" viewBox="0 0 618 239"><rect x="79.8" y="64.3" width="321.0" height="127.5" fill="#fff"/><rect x="79.8" y="89.8" width="321.0" height="26.7" fill="#f4f4f4"/><rect x="79.8" y="140.8" width="321.0" height="26.7" fill="#f4f4f4"/><line x1="162.7" y1="64.3" x2="162.7" y2="191.8" stroke="#e4e4e4" stroke-width="1"/><line x1="240.1" y1="64.3" x2="240.1" y2="191.8" stroke="#e4e4e4" stroke-width="1"/><line x1="317.5" y1="64.3" x2="317.5" y2="191.8" stroke="#e4e4e4" stroke-width="1"/><rect x="79.8" y="64.3" width="321.0" height="127.5" fill="none" stroke="#ebebeb" stroke-width="1"/><text x="74.8" y="68.0" font-size="9" text-anchor="end" fill="#161616">$5,000,000</text><text x="74.8" y="94.0" font-size="9" text-anchor="end" fill="#161616">$4,000,000</text><text x="74.8" y="119.0" font-size="9" text-anchor="end" fill="#161616">$3,000,000</text><text x="74.8" y="145.0" font-size="9" text-anchor="end" fill="#161616">$2,000,000</text><text x="74.8" y="170.0" font-size="9" text-anchor="end" fill="#161616">$1,000,000</text><text x="74.8" y="195.0" font-size="9" text-anchor="end" fill="#161616">$0</text><text x="85.4" y="204.0" font-size="9" text-anchor="middle" fill="#161616">Year Ending</text><text x="85.4" y="215.0" font-size="9" text-anchor="middle" fill="#161616">12/31/2014</text><text x="162.7" y="204.0" font-size="9" text-anchor="middle" fill="#161616">Year Ending</text><text x="162.7" y="215.0" font-size="9" text-anchor="middle" fill="#161616">12/31/2015</text><text x="240.1" y="204.0" font-size="9" text-anchor="middle" fill="#161616">Year Ending</text><text x="240.1" y="215.0" font-size="9" text-anchor="middle" fill="#161616">12/31/2016</text><text x="317.5" y="204.0" font-size="9" text-anchor="middle" fill="#161616">Year Ending</text><text x="317.5" y="215.0" font-size="9" text-anchor="middle" fill="#161616">12/31/2017</text><text x="394.8" y="204.0" font-size="9" text-anchor="middle" fill="#161616">Year Ending</text><text x="394.8" y="215.0" font-size="9" text-anchor="middle" fill="#161616">12/31/2018</text><polyline points="85.4,191.8 162.7,191.8 240.1,191.8 317.5,191.8 394.8,191.8" fill="none" stroke="#efb04e" stroke-width="1.9" stroke-opacity=".92" stroke-linejoin="round"/><circle cx="85.4" cy="191.8" r="2.55" fill="#fff" stroke="#efb04e" stroke-width="1"/><circle cx="162.7" cy="191.8" r="2.55" fill="#fff" stroke="#efb04e" stroke-width="1"/><circle cx="240.1" cy="191.8" r="2.55" fill="#fff" stroke="#efb04e" stroke-width="1"/><circle cx="317.5" cy="191.8" r="2.55" fill="#fff" stroke="#efb04e" stroke-width="1"/><circle cx="394.8" cy="191.8" r="2.55" fill="#fff" stroke="#efb04e" stroke-width="1"/><polyline points="85.4,184.8 162.7,186.8 240.1,186.8 317.5,186.8 394.8,186.8" fill="none" stroke="#5cc2bd" stroke-width="1.9" stroke-opacity=".92" stroke-linejoin="round"/><circle cx="85.4" cy="184.8" r="2.55" fill="#fff" stroke="#5cc2bd" stroke-width="1"/><circle cx="162.7" cy="186.8" r="2.55" fill="#fff" stroke="#5cc2bd" stroke-width="1"/><circle cx="240.1" cy="186.8" r="2.55" fill="#fff" stroke="#5cc2bd" stroke-width="1"/><circle cx="317.5" cy="186.8" r="2.55" fill="#fff" stroke="#5cc2bd" stroke-width="1"/><circle cx="394.8" cy="186.8" r="2.55" fill="#fff" stroke="#5cc2bd" stroke-width="1"/><polyline points="85.4,162.6 162.7,161.6 240.1,159.9 317.5,160.9 394.8,158.9" fill="none" stroke="#3a7d95" stroke-width="1.9" stroke-opacity=".92" stroke-linejoin="round"/><circle cx="85.4" cy="162.6" r="2.55" fill="#fff" stroke="#3a7d95" stroke-width="1"/><circle cx="162.7" cy="161.6" r="2.55" fill="#fff" stroke="#3a7d95" stroke-width="1"/><circle cx="240.1" cy="159.9" r="2.55" fill="#fff" stroke="#3a7d95" stroke-width="1"/><circle cx="317.5" cy="160.9" r="2.55" fill="#fff" stroke="#3a7d95" stroke-width="1"/><circle cx="394.8" cy="158.9" r="2.55" fill="#fff" stroke="#3a7d95" stroke-width="1"/><polyline points="85.4,148.2 162.7,146.1 240.1,143.8 317.5,146.1 394.8,143.8" fill="none" stroke="#c3d755" stroke-width="1.9" stroke-opacity=".92" stroke-linejoin="round"/><circle cx="85.4" cy="148.2" r="2.55" fill="#fff" stroke="#c3d755" stroke-width="1"/><circle cx="162.7" cy="146.1" r="2.55" fill="#fff" stroke="#c3d755" stroke-width="1"/><circle cx="240.1" cy="143.8" r="2.55" fill="#fff" stroke="#c3d755" stroke-width="1"/><circle cx="317.5" cy="146.1" r="2.55" fill="#fff" stroke="#c3d755" stroke-width="1"/><circle cx="394.8" cy="143.8" r="2.55" fill="#fff" stroke="#c3d755" stroke-width="1"/><polyline points="85.4,126.7 162.7,137.0 240.1,118.3 317.5,135.7 394.8,120.0" fill="none" stroke="#e8804f" stroke-width="1.9" stroke-opacity=".92" stroke-linejoin="round"/><circle cx="85.4" cy="126.7" r="2.55" fill="#fff" stroke="#e8804f" stroke-width="1"/><circle cx="162.7" cy="137.0" r="2.55" fill="#fff" stroke="#e8804f" stroke-width="1"/><circle cx="240.1" cy="118.3" r="2.55" fill="#fff" stroke="#e8804f" stroke-width="1"/><circle cx="317.5" cy="135.7" r="2.55" fill="#fff" stroke="#e8804f" stroke-width="1"/><circle cx="394.8" cy="120.0" r="2.55" fill="#fff" stroke="#e8804f" stroke-width="1"/><polyline points="85.4,83.3 162.7,77.0 240.1,69.6 317.5,79.0 394.8,68.9" fill="none" stroke="#cc4a6c" stroke-width="1.9" stroke-opacity=".92" stroke-linejoin="round"/><circle cx="85.4" cy="83.3" r="2.55" fill="#fff" stroke="#cc4a6c" stroke-width="1"/><circle cx="162.7" cy="77.0" r="2.55" fill="#fff" stroke="#cc4a6c" stroke-width="1"/><circle cx="240.1" cy="69.6" r="2.55" fill="#fff" stroke="#cc4a6c" stroke-width="1"/><circle cx="317.5" cy="79.0" r="2.55" fill="#fff" stroke="#cc4a6c" stroke-width="1"/><circle cx="394.8" cy="68.9" r="2.55" fill="#fff" stroke="#cc4a6c" stroke-width="1"/><rect x="412.4" y="81.5" width="184.5" height="98.5" fill="#d3d3d3"/><rect x="410.9" y="80.0" width="184.5" height="98.5" fill="#fff" stroke="#dadada" stroke-width="1"/><line x1="417.2" y1="90.8" x2="427.2" y2="90.8" stroke="#c3d755" stroke-width="1.1"/><circle cx="422.2" cy="90.8" r="3" fill="#fff" stroke="#c3d755" stroke-width="0.95"/><text x="431.8" y="94.0" font-size="9" fill="#1a1a1a">Program services revenue</text><line x1="417.2" y1="105.9" x2="427.2" y2="105.9" stroke="#5cc2bd" stroke-width="1.1"/><circle cx="422.2" cy="105.9" r="3" fill="#fff" stroke="#5cc2bd" stroke-width="0.95"/><text x="431.8" y="109.1" font-size="9" fill="#1a1a1a">Membership dues</text><line x1="417.2" y1="121.0" x2="427.2" y2="121.0" stroke="#efb04e" stroke-width="1.1"/><circle cx="422.2" cy="121.0" r="3" fill="#fff" stroke="#efb04e" stroke-width="0.95"/><text x="431.8" y="124.2" font-size="9" fill="#1a1a1a">Government Grants</text><line x1="417.2" y1="136.2" x2="427.2" y2="136.2" stroke="#e8804f" stroke-width="1.1"/><circle cx="422.2" cy="136.2" r="3" fill="#fff" stroke="#e8804f" stroke-width="0.95"/><text x="431.8" y="139.4" font-size="9" fill="#1a1a1a">All other grants and contributions</text><line x1="417.2" y1="151.8" x2="427.2" y2="151.8" stroke="#3a7d95" stroke-width="1.1"/><circle cx="422.2" cy="151.8" r="3" fill="#fff" stroke="#3a7d95" stroke-width="0.95"/><text x="431.8" y="155.0" font-size="9" fill="#1a1a1a">Investment income</text><line x1="417.2" y1="166.9" x2="427.2" y2="166.9" stroke="#cc4a6c" stroke-width="1.1"/><circle cx="422.2" cy="166.9" r="3" fill="#fff" stroke="#cc4a6c" stroke-width="0.95"/><text x="431.8" y="170.1" font-size="9" fill="#1a1a1a">Other revenue</text><g transform="translate(583.2,56.2)"><rect x="0.5" y="0.5" width="16" height="16" rx="2" fill="#dcdcdc" stroke="#c4c4c4"/><path d="M8.5 3V10.4M5.8 8L8.5 10.8L11.2 8" fill="none" stroke="#8a8a8a" stroke-width="1.1"/><path d="M3.6 10.4V13.2H13.4V10.4" fill="none" stroke="#8a8a8a" stroke-width="1.1"/></g></svg></div><div class="panel" style="left:630.3px;top:260px;width:617.7px;height:237.7px"><svg class="chev" width="11" height="7" viewBox="0 0 11 7" fill="none" stroke="#222" stroke-width="1.1" stroke-linecap="round" stroke-linejoin="round"><path d="M0.800 1.400L5.300 5.900L9.800 1.400"/></svg><h3>Earned Revenue</h3><div class="ts">02/03/2023 12:30:53</div><svg class="tools" viewBox="0 0 99 16" width="99" height="16" fill="none" stroke="#444" stroke-width="1" stroke-linecap="round" stroke-linejoin="round"><path d="M0.6 1H12.8L8.1 6.9V11.4L5.3 13V6.9Z" stroke="#d2d6d9"/><g transform="translate(17,1.5)"><path d="M0.7 12.3L1.3 9.1L9.2 1.2a1.5 1.5 0 0 1 2.1 0l0.5 0.5a1.5 1.5 0 0 1 0 2.1L3.9 11.7Z"/><path d="M1.3 9.1L3.9 11.7M8 2.4L10.600 5" /><path d="M0.7 12.3L2.5 12L1 10.500Z" fill="#444"/></g><g transform="translate(34.5,2)"><path d="M1 5.2A5.600 5.600 0 0 1 11.600 3.400"/><path d="M12 0.600V3.800H8.800"/><path d="M12 7.600A5.600 5.600 0 0 1 1.400 9.400"/><path d="M1 12.200V9H4.200"/></g><g transform="translate(51.3,1)"><circle cx="5.700" cy="5.700" r="5"/><path d="M9.300 9.300L12.500 12.500"/></g><g transform="translate(75.1,8)"><path d="M-1.45 -4.47L-1.25 -6.18A6.3 6.3 0 0 1 1.25 -6.18L1.45 -4.47A4.7 4.7 0 0 1 3.14 -3.49L3.14 -3.49L4.73 -4.17A6.3 6.3 0 0 1 5.97 -2.01L4.60 -0.98A4.7 4.7 0 0 1 4.60 0.98L4.60 0.98L5.97 2.01A6.3 6.3 0 0 1 4.73 4.17L3.14 3.49A4.7 4.7 0 0 1 1.45 4.47L1.45 4.47L1.25 6.18A6.3 6.3 0 0 1 -1.25 6.18L-1.45 4.47A4.7 4.7 0 0 1 -3.14 3.49L-3.14 3.49L-4.73 4.17A6.3 6.3 0 0 1 -5.97 2.01L-4.60 0.98A4.7 4.7 0 0 1 -4.60 -0.98L-4.60 -0.98L-5.97 -2.01A6.3 6.3 0 0 1 -4.73 -4.17L-3.14 -3.49A4.7 4.7 0 0 1 -1.45 -4.47Z"/><circle cx="0" cy="0" r="2.2"/></g><g transform="translate(85.7,1)" stroke-width="0.9"><path d="M0.400 2.600H10.800M3.600 2.400V1.200a0.600 0.600 0 0 1 .6-.6H7a0.600 0.600 0 0 1 .6 .6V2.400"/><path d="M1.400 2.800V12.600a0.800 0.800 0 0 0 .8 .8H9a0.800 0.800 0 0 0 .8-.8V2.800"/><path d="M3.600 4.600V11.600M5.600 4.600V11.600M7.600 4.600V11.600" stroke-width="0.8"/></g></svg><div class="sep" style="top:49px"></div><div class="body" style="top:50px;bottom:7.5px"></div><svg class="abs" style="left:0;top:0" width="618" height="239" viewBox="0 0 618 239"><rect x="79.8" y="63.3" width="321.0" height="127.8" fill="#fff"/><rect x="79.8" y="88.9" width="321.0" height="26.8" fill="#f4f4f4"/><rect x="79.8" y="140.0" width="321.0" height="26.8" fill="#f4f4f4"/><line x1="162.7" y1="63.3" x2="162.7" y2="191.1" stroke="#e4e4e4" stroke-width="1"/><line x1="240.1" y1="63.3" x2="240.1" y2="191.1" stroke="#e4e4e4" stroke-width="1"/><line x1="317.5" y1="63.3" x2="317.5" y2="191.1" stroke="#e4e4e4" stroke-width="1"/><rect x="79.8" y="63.3" width="321.0" height="127.8" fill="none" stroke="#ebebeb" stroke-width="1"/><text x="74.8" y="67.0" font-size="9" text-anchor="end" fill="#161616">$3,000,000</text><text x="74.8" y="93.0" font-size="9" text-anchor="end" fill="#161616">$2,400,000</text><text x="74.8" y="118.0" font-size="9" text-anchor="end" fill="#161616">$1,800,000</text><text x="74.8" y="144.0" font-size="9" text-anchor="end" fill="#161616">$1,200,000</text><text x="74.8" y="169.0" font-size="9" text-anchor="end" fill="#161616">$600,000</text><text x="74.8" y="194.0" font-size="9" text-anchor="end" fill="#161616">$0</text><text x="85.4" y="203.0" font-size="9" text-anchor="middle" fill="#161616">Year Ending</text><text x="85.4" y="214.0" font-size="9" text-anchor="middle" fill="#161616">12/31/2014</text><text x="162.7" y="203.0" font-size="9" text-anchor="middle" fill="#161616">Year Ending</text><text x="162.7" y="214.0" font-size="9" text-anchor="middle" fill="#161616">12/31/2015</text><text x="240.1" y="203.0" font-size="9" text-anchor="middle" fill="#161616">Year Ending</text><text x="240.1" y="214.0" font-size="9" text-anchor="middle" fill="#161616">12/31/2016</text><text x="317.5" y="203.0" font-size="9" text-anchor="middle" fill="#161616">Year Ending</text><text x="317.5" y="214.0" font-size="9" text-anchor="middle" fill="#161616">12/31/2017</text><text x="394.8" y="203.0" font-size="9" text-anchor="middle" fill="#161616">Year Ending</text><text x="394.8" y="214.0" font-size="9" text-anchor="middle" fill="#161616">12/31/2018</text><polyline points="85.4,191.1 162.7,191.1 240.1,191.1 317.5,191.1 394.8,191.1" fill="none" stroke="#5cc2bd" stroke-width="1.9" stroke-opacity=".92" stroke-linejoin="round"/><circle cx="85.4" cy="191.1" r="2.55" fill="#fff" stroke="#5cc2bd" stroke-width="1"/><circle cx="162.7" cy="191.1" r="2.55" fill="#fff" stroke="#5cc2bd" stroke-width="1"/><circle cx="240.1" cy="191.1" r="2.55" fill="#fff" stroke="#5cc2bd" stroke-width="1"/><circle cx="317.5" cy="191.1" r="2.55" fill="#fff" stroke="#5cc2bd" stroke-width="1"/><circle cx="394.8" cy="191.1" r="2.55" fill="#fff" stroke="#5cc2bd" stroke-width="1"/><polyline points="85.4,191.1 162.7,191.1 240.1,191.1 317.5,191.1 394.8,191.1" fill="none" stroke="#efb04e" stroke-width="1.9" stroke-opacity=".92" stroke-linejoin="round"/><circle cx="85.4" cy="191.1" r="2.55" fill="#fff" stroke="#efb04e" stroke-width="1"/><circle cx="162.7" cy="191.1" r="2.55" fill="#fff" stroke="#efb04e" stroke-width="1"/><circle cx="240.1" cy="191.1" r="2.55" fill="#fff" stroke="#efb04e" stroke-width="1"/><circle cx="317.5" cy="191.1" r="2.55" fill="#fff" stroke="#efb04e" stroke-width="1"/><circle cx="394.8" cy="191.1" r="2.55" fill="#fff" stroke="#efb04e" stroke-width="1"/><polyline points="85.4,191.1 162.7,191.1 240.1,191.1 317.5,191.1 394.8,191.1" fill="none" stroke="#e8804f" stroke-width="1.9" stroke-opacity=".92" stroke-linejoin="round"/><circle cx="85.4" cy="191.1" r="2.55" fill="#fff" stroke="#e8804f" stroke-width="1"/><circle cx="162.7" cy="191.1" r="2.55" fill="#fff" stroke="#e8804f" stroke-width="1"/><circle cx="240.1" cy="191.1" r="2.55" fill="#fff" stroke="#e8804f" stroke-width="1"/><circle cx="317.5" cy="191.1" r="2.55" fill="#fff" stroke="#e8804f" stroke-width="1"/><circle cx="394.8" cy="191.1" r="2.55" fill="#fff" stroke="#e8804f" stroke-width="1"/><polyline points="85.4,142.4 162.7,139.7 240.1,137.1 317.5,138.7 394.8,136.0" fill="none" stroke="#cc4a6c" stroke-width="1.9" stroke-opacity=".92" stroke-linejoin="round"/><circle cx="85.4" cy="142.4" r="2.55" fill="#fff" stroke="#cc4a6c" stroke-width="1"/><circle cx="162.7" cy="139.7" r="2.55" fill="#fff" stroke="#cc4a6c" stroke-width="1"/><circle cx="240.1" cy="137.1" r="2.55" fill="#fff" stroke="#cc4a6c" stroke-width="1"/><circle cx="317.5" cy="138.7" r="2.55" fill="#fff" stroke="#cc4a6c" stroke-width="1"/><circle cx="394.8" cy="136.0" r="2.55" fill="#fff" stroke="#cc4a6c" stroke-width="1"/><polyline points="85.4,117.3 162.7,114.6 240.1,109.9 317.5,114.6 394.8,109.9" fill="none" stroke="#c3d755" stroke-width="1.9" stroke-opacity=".92" stroke-linejoin="round"/><circle cx="85.4" cy="117.3" r="2.55" fill="#fff" stroke="#c3d755" stroke-width="1"/><circle cx="162.7" cy="114.6" r="2.55" fill="#fff" stroke="#c3d755" stroke-width="1"/><circle cx="240.1" cy="109.9" r="2.55" fill="#fff" stroke="#c3d755" stroke-width="1"/><circle cx="317.5" cy="114.6" r="2.55" fill="#fff" stroke="#c3d755" stroke-width="1"/><circle cx="394.8" cy="109.9" r="2.55" fill="#fff" stroke="#c3d755" stroke-width="1"/><polyline points="85.4,112.9 162.7,109.9 240.1,104.8 317.5,109.2 394.8,104.8" fill="none" stroke="#3a7d95" stroke-width="1.9" stroke-opacity=".92" stroke-linejoin="round"/><circle cx="85.4" cy="112.9" r="2.55" fill="#fff" stroke="#3a7d95" stroke-width="1"/><circle cx="162.7" cy="109.9" r="2.55" fill="#fff" stroke="#3a7d95" stroke-width="1"/><circle cx="240.1" cy="104.8" r="2.55" fill="#fff" stroke="#3a7d95" stroke-width="1"/><circle cx="317.5" cy="109.2" r="2.55" fill="#fff" stroke="#3a7d95" stroke-width="1"/><circle cx="394.8" cy="104.8" r="2.55" fill="#fff" stroke="#3a7d95" stroke-width="1"/><polyline points="85.4,87.7 162.7,79.6 240.1,72.3 317.5,85.0 394.8,72.3" fill="none" stroke="#8fd2e2" stroke-width="1.9" stroke-opacity=".92" stroke-linejoin="round"/><circle cx="85.4" cy="87.7" r="2.55" fill="#fff" stroke="#8fd2e2" stroke-width="1"/><circle cx="162.7" cy="79.6" r="2.55" fill="#fff" stroke="#8fd2e2" stroke-width="1"/><circle cx="240.1" cy="72.3" r="2.55" fill="#fff" stroke="#8fd2e2" stroke-width="1"/><circle cx="317.5" cy="85.0" r="2.55" fill="#fff" stroke="#8fd2e2" stroke-width="1"/><circle cx="394.8" cy="72.3" r="2.55" fill="#fff" stroke="#8fd2e2" stroke-width="1"/><rect x="416.4" y="72.4" width="180.5" height="114.4" fill="#d3d3d3"/><rect x="414.9" y="70.9" width="180.5" height="114.4" fill="#fff" stroke="#dadada" stroke-width="1"/><line x1="421.0" y1="82.0" x2="431.0" y2="82.0" stroke="#c3d755" stroke-width="1.1"/><circle cx="426.0" cy="82.0" r="3" fill="#fff" stroke="#c3d755" stroke-width="0.95"/><text x="436.1" y="85.2" font-size="9" fill="#1a1a1a">Program services revenue</text><line x1="421.0" y1="97.6" x2="431.0" y2="97.6" stroke="#5cc2bd" stroke-width="1.1"/><circle cx="426.0" cy="97.6" r="3" fill="#fff" stroke="#5cc2bd" stroke-width="0.95"/><text x="436.1" y="100.8" font-size="9" fill="#1a1a1a">Net rental income</text><line x1="421.0" y1="112.7" x2="431.0" y2="112.7" stroke="#efb04e" stroke-width="1.1"/><circle cx="426.0" cy="112.7" r="3" fill="#fff" stroke="#efb04e" stroke-width="0.95"/><text x="436.1" y="115.9" font-size="9" fill="#1a1a1a">Royalties</text><line x1="421.0" y1="127.8" x2="431.0" y2="127.8" stroke="#e8804f" stroke-width="1.1"/><circle cx="426.0" cy="127.8" r="3" fill="#fff" stroke="#e8804f" stroke-width="0.95"/><text x="436.1" y="131.0" font-size="9" fill="#1a1a1a">Gaming</text><line x1="421.0" y1="143.4" x2="431.0" y2="143.4" stroke="#3a7d95" stroke-width="1.1"/><circle cx="426.0" cy="143.4" r="3" fill="#fff" stroke="#3a7d95" stroke-width="0.95"/><text x="436.1" y="146.6" font-size="9" fill="#1a1a1a">Inventory and Other Asset Sales</text><line x1="421.0" y1="158.6" x2="431.0" y2="158.6" stroke="#cc4a6c" stroke-width="1.1"/><circle cx="426.0" cy="158.6" r="3" fill="#fff" stroke="#cc4a6c" stroke-width="0.95"/><text x="436.1" y="161.8" font-size="9" fill="#1a1a1a">Investment income</text><line x1="421.0" y1="173.7" x2="431.0" y2="173.7" stroke="#8fd2e2" stroke-width="1.1"/><circle cx="426.0" cy="173.7" r="3" fill="#fff" stroke="#8fd2e2" stroke-width="0.95"/><text x="436.1" y="176.9" font-size="9" fill="#1a1a1a">Other</text><g transform="translate(583.2,55.7)"><rect x="0.5" y="0.5" width="16" height="16" rx="2" fill="#dcdcdc" stroke="#c4c4c4"/><path d="M8.5 3V10.4M5.8 8L8.5 10.8L11.2 8" fill="none" stroke="#8a8a8a" stroke-width="1.1"/><path d="M3.6 10.4V13.2H13.4V10.4" fill="none" stroke="#8a8a8a" stroke-width="1.1"/></g></svg></div><div class="panel" style="left:630.3px;top:509px;width:617.7px;height:237.7px"><svg class="chev" width="11" height="7" viewBox="0 0 11 7" fill="none" stroke="#222" stroke-width="1.1" stroke-linecap="round" stroke-linejoin="round"><path d="M0.800 1.400L5.300 5.900L9.800 1.400"/></svg><h3>Expense &amp; Personnel Costs</h3><div class="ts">02/03/2023 12:30:53</div><svg class="tools" viewBox="0 0 99 16" width="99" height="16" fill="none" stroke="#444" stroke-width="1" stroke-linecap="round" stroke-linejoin="round"><path d="M0.6 1H12.8L8.1 6.9V11.4L5.3 13V6.9Z" stroke="#d2d6d9"/><g transform="translate(17,1.5)"><path d="M0.7 12.3L1.3 9.1L9.2 1.2a1.5 1.5 0 0 1 2.1 0l0.5 0.5a1.5 1.5 0 0 1 0 2.1L3.9 11.7Z"/><path d="M1.3 9.1L3.9 11.7M8 2.4L10.600 5" /><path d="M0.7 12.3L2.5 12L1 10.500Z" fill="#444"/></g><g transform="translate(34.5,2)"><path d="M1 5.2A5.600 5.600 0 0 1 11.600 3.400"/><path d="M12 0.600V3.800H8.800"/><path d="M12 7.600A5.600 5.600 0 0 1 1.400 9.400"/><path d="M1 12.200V9H4.200"/></g><g transform="translate(51.3,1)"><circle cx="5.700" cy="5.700" r="5"/><path d="M9.300 9.300L12.500 12.500"/></g><g transform="translate(75.1,8)"><path d="M-1.45 -4.47L-1.25 -6.18A6.3 6.3 0 0 1 1.25 -6.18L1.45 -4.47A4.7 4.7 0 0 1 3.14 -3.49L3.14 -3.49L4.73 -4.17A6.3 6.3 0 0 1 5.97 -2.01L4.60 -0.98A4.7 4.7 0 0 1 4.60 0.98L4.60 0.98L5.97 2.01A6.3 6.3 0 0 1 4.73 4.17L3.14 3.49A4.7 4.7 0 0 1 1.45 4.47L1.45 4.47L1.25 6.18A6.3 6.3 0 0 1 -1.25 6.18L-1.45 4.47A4.7 4.7 0 0 1 -3.14 3.49L-3.14 3.49L-4.73 4.17A6.3 6.3 0 0 1 -5.97 2.01L-4.60 0.98A4.7 4.7 0 0 1 -4.60 -0.98L-4.60 -0.98L-5.97 -2.01A6.3 6.3 0 0 1 -4.73 -4.17L-3.14 -3.49A4.7 4.7 0 0 1 -1.45 -4.47Z"/><circle cx="0" cy="0" r="2.2"/></g><g transform="translate(85.7,1)" stroke-width="0.9"><path d="M0.400 2.600H10.800M3.600 2.400V1.200a0.600 0.600 0 0 1 .6-.6H7a0.600 0.600 0 0 1 .6 .6V2.400"/><path d="M1.400 2.800V12.600a0.800 0.800 0 0 0 .8 .8H9a0.800 0.800 0 0 0 .8-.8V2.800"/><path d="M3.600 4.600V11.600M5.600 4.600V11.600M7.600 4.600V11.600" stroke-width="0.8"/></g></svg><div class="sep" style="top:49px"></div><div class="body" style="top:50px;bottom:7.5px"></div><svg class="abs" style="left:0;top:0" width="618" height="239" viewBox="0 0 618 239"><rect x="79.8" y="63.5" width="333.8" height="127.7" fill="#fff"/><rect x="79.8" y="89.0" width="333.8" height="26.7" fill="#f4f4f4"/><rect x="79.8" y="140.1" width="333.8" height="26.7" fill="#f4f4f4"/><line x1="165.9" y1="63.5" x2="165.9" y2="191.2" stroke="#e4e4e4" stroke-width="1"/><line x1="246.5" y1="63.5" x2="246.5" y2="191.2" stroke="#e4e4e4" stroke-width="1"/><line x1="327.0" y1="63.5" x2="327.0" y2="191.2" stroke="#e4e4e4" stroke-width="1"/><rect x="79.8" y="63.5" width="333.8" height="127.7" fill="none" stroke="#ebebeb" stroke-width="1"/><text x="74.8" y="67.0" font-size="9" text-anchor="end" fill="#161616">$8,000,000</text><text x="74.8" y="93.0" font-size="9" text-anchor="end" fill="#161616">$6,400,000</text><text x="74.8" y="118.0" font-size="9" text-anchor="end" fill="#161616">$4,800,000</text><text x="74.8" y="144.0" font-size="9" text-anchor="end" fill="#161616">$3,200,000</text><text x="74.8" y="169.0" font-size="9" text-anchor="end" fill="#161616">$1,600,000</text><text x="74.8" y="194.0" font-size="9" text-anchor="end" fill="#161616">$0</text><text x="85.4" y="203.0" font-size="9" text-anchor="middle" fill="#161616">Year Ending</text><text x="85.4" y="214.0" font-size="9" text-anchor="middle" fill="#161616">12/31/2014</text><text x="165.9" y="203.0" font-size="9" text-anchor="middle" fill="#161616">Year Ending</text><text x="165.9" y="214.0" font-size="9" text-anchor="middle" fill="#161616">12/31/2015</text><text x="246.5" y="203.0" font-size="9" text-anchor="middle" fill="#161616">Year Ending</text><text x="246.5" y="214.0" font-size="9" text-anchor="middle" fill="#161616">12/31/2016</text><text x="327.0" y="203.0" font-size="9" text-anchor="middle" fill="#161616">Year Ending</text><text x="327.0" y="214.0" font-size="9" text-anchor="middle" fill="#161616">12/31/2017</text><text x="407.6" y="203.0" font-size="9" text-anchor="middle" fill="#161616">Year Ending</text><text x="407.6" y="214.0" font-size="9" text-anchor="middle" fill="#161616">12/31/2018</text><polyline points="85.4,164.3 165.9,164.3 246.5,162.2 327.0,166.9 407.6,162.2" fill="none" stroke="#5cc2bd" stroke-width="1.9" stroke-opacity=".92" stroke-linejoin="round"/><circle cx="85.4" cy="164.3" r="2.55" fill="#fff" stroke="#5cc2bd" stroke-width="1"/><circle cx="165.9" cy="164.3" r="2.55" fill="#fff" stroke="#5cc2bd" stroke-width="1"/><circle cx="246.5" cy="162.2" r="2.55" fill="#fff" stroke="#5cc2bd" stroke-width="1"/><circle cx="327.0" cy="166.9" r="2.55" fill="#fff" stroke="#5cc2bd" stroke-width="1"/><circle cx="407.6" cy="162.2" r="2.55" fill="#fff" stroke="#5cc2bd" stroke-width="1"/><polyline points="85.4,82.0 165.9,79.3 246.5,71.6 327.0,82.3 407.6,74.3" fill="none" stroke="#c3d755" stroke-width="1.9" stroke-opacity=".92" stroke-linejoin="round"/><circle cx="85.4" cy="82.0" r="2.55" fill="#fff" stroke="#c3d755" stroke-width="1"/><circle cx="165.9" cy="79.3" r="2.55" fill="#fff" stroke="#c3d755" stroke-width="1"/><circle cx="246.5" cy="71.6" r="2.55" fill="#fff" stroke="#c3d755" stroke-width="1"/><circle cx="327.0" cy="82.3" r="2.55" fill="#fff" stroke="#c3d755" stroke-width="1"/><circle cx="407.6" cy="74.3" r="2.55" fill="#fff" stroke="#c3d755" stroke-width="1"/><rect x="429.2" y="110.3" width="167.7" height="38.2" fill="#d3d3d3"/><rect x="427.7" y="108.8" width="167.7" height="38.2" fill="#fff" stroke="#dadada" stroke-width="1"/><line x1="433.8" y1="120.0" x2="443.8" y2="120.0" stroke="#c3d755" stroke-width="1.1"/><circle cx="438.8" cy="120.0" r="3" fill="#fff" stroke="#c3d755" stroke-width="0.95"/><text x="448.5" y="123.2" font-size="9" fill="#1a1a1a">Expenses Before Depreciation</text><line x1="433.8" y1="135.0" x2="443.8" y2="135.0" stroke="#5cc2bd" stroke-width="1.1"/><circle cx="438.8" cy="135.0" r="3" fill="#fff" stroke="#5cc2bd" stroke-width="0.95"/><text x="448.5" y="138.2" font-size="9" fill="#1a1a1a">Personnel</text><g transform="translate(583.2,55.5)"><rect x="0.5" y="0.5" width="16" height="16" rx="2" fill="#dcdcdc" stroke="#c4c4c4"/><path d="M8.5 3V10.4M5.8 8L8.5 10.8L11.2 8" fill="none" stroke="#8a8a8a" stroke-width="1.1"/><path d="M3.6 10.4V13.2H13.4V10.4" fill="none" stroke="#8a8a8a" stroke-width="1.1"/></g></svg></div><div class="panel" style="left:1259px;top:11px;width:617.7px;height:237.7px"><svg class="chev" width="11" height="7" viewBox="0 0 11 7" fill="none" stroke="#222" stroke-width="1.1" stroke-linecap="round" stroke-linejoin="round"><path d="M0.800 1.400L5.300 5.900L9.800 1.400"/></svg><h3>Major Expense Categories</h3><div class="ts">02/03/2023 12:30:53</div><svg class="tools" viewBox="0 0 99 16" width="99" height="16" fill="none" stroke="#444" stroke-width="1" stroke-linecap="round" stroke-linejoin="round"><path d="M0.6 1H12.8L8.1 6.9V11.4L5.3 13V6.9Z" stroke="#d2d6d9"/><g transform="translate(17,1.5)"><path d="M0.7 12.3L1.3 9.1L9.2 1.2a1.5 1.5 0 0 1 2.1 0l0.5 0.5a1.5 1.5 0 0 1 0 2.1L3.9 11.7Z"/><path d="M1.3 9.1L3.9 11.7M8 2.4L10.600 5" /><path d="M0.7 12.3L2.5 12L1 10.500Z" fill="#444"/></g><g transform="translate(34.5,2)"><path d="M1 5.2A5.600 5.600 0 0 1 11.600 3.400"/><path d="M12 0.600V3.800H8.800"/><path d="M12 7.600A5.600 5.600 0 0 1 1.400 9.400"/><path d="M1 12.200V9H4.200"/></g><g transform="translate(51.3,1)"><circle cx="5.700" cy="5.700" r="5"/><path d="M9.300 9.300L12.500 12.500"/></g><g transform="translate(75.1,8)"><path d="M-1.45 -4.47L-1.25 -6.18A6.3 6.3 0 0 1 1.25 -6.18L1.45 -4.47A4.7 4.7 0 0 1 3.14 -3.49L3.14 -3.49L4.73 -4.17A6.3 6.3 0 0 1 5.97 -2.01L4.60 -0.98A4.7 4.7 0 0 1 4.60 0.98L4.60 0.98L5.97 2.01A6.3 6.3 0 0 1 4.73 4.17L3.14 3.49A4.7 4.7 0 0 1 1.45 4.47L1.45 4.47L1.25 6.18A6.3 6.3 0 0 1 -1.25 6.18L-1.45 4.47A4.7 4.7 0 0 1 -3.14 3.49L-3.14 3.49L-4.73 4.17A6.3 6.3 0 0 1 -5.97 2.01L-4.60 0.98A4.7 4.7 0 0 1 -4.60 -0.98L-4.60 -0.98L-5.97 -2.01A6.3 6.3 0 0 1 -4.73 -4.17L-3.14 -3.49A4.7 4.7 0 0 1 -1.45 -4.47Z"/><circle cx="0" cy="0" r="2.2"/></g><g transform="translate(85.7,1)" stroke-width="0.9"><path d="M0.400 2.600H10.800M3.600 2.400V1.200a0.600 0.600 0 0 1 .6-.6H7a0.600 0.600 0 0 1 .6 .6V2.400"/><path d="M1.400 2.800V12.600a0.800 0.800 0 0 0 .8 .8H9a0.800 0.800 0 0 0 .8-.8V2.800"/><path d="M3.600 4.600V11.600M5.600 4.600V11.600M7.600 4.600V11.600" stroke-width="0.8"/></g></svg><div class="sep" style="top:50px"></div><div class="body" style="top:51px;bottom:7.5px"></div><svg class="abs" style="left:0;top:0" width="618" height="239" viewBox="0 0 618 239"><rect x="79.4" y="64.3" width="377.7" height="127.5" fill="#fff"/><rect x="79.4" y="89.8" width="377.7" height="26.7" fill="#f4f4f4"/><rect x="79.4" y="140.8" width="377.7" height="26.7" fill="#f4f4f4"/><line x1="176.9" y1="64.3" x2="176.9" y2="191.8" stroke="#e4e4e4" stroke-width="1"/><line x1="268.5" y1="64.3" x2="268.5" y2="191.8" stroke="#e4e4e4" stroke-width="1"/><line x1="360.0" y1="64.3" x2="360.0" y2="191.8" stroke="#e4e4e4" stroke-width="1"/><rect x="79.4" y="64.3" width="377.7" height="127.5" fill="none" stroke="#ebebeb" stroke-width="1"/><text x="74.4" y="68.0" font-size="9" text-anchor="end" fill="#161616">$8,000,000</text><text x="74.4" y="94.0" font-size="9" text-anchor="end" fill="#161616">$6,400,000</text><text x="74.4" y="119.0" font-size="9" text-anchor="end" fill="#161616">$4,800,000</text><text x="74.4" y="145.0" font-size="9" text-anchor="end" fill="#161616">$3,200,000</text><text x="74.4" y="170.0" font-size="9" text-anchor="end" fill="#161616">$1,600,000</text><text x="74.4" y="195.0" font-size="9" text-anchor="end" fill="#161616">$0</text><text x="85.4" y="204.0" font-size="9" text-anchor="middle" fill="#161616">Year Ending</text><text x="85.4" y="215.0" font-size="9" text-anchor="middle" fill="#161616">12/31/2014</text><text x="176.9" y="204.0" font-size="9" text-anchor="middle" fill="#161616">Year Ending</text><text x="176.9" y="215.0" font-size="9" text-anchor="middle" fill="#161616">12/31/2015</text><text x="268.5" y="204.0" font-size="9" text-anchor="middle" fill="#161616">Year Ending</text><text x="268.5" y="215.0" font-size="9" text-anchor="middle" fill="#161616">12/31/2016</text><text x="360.0" y="204.0" font-size="9" text-anchor="middle" fill="#161616">Year Ending</text><text x="360.0" y="215.0" font-size="9" text-anchor="middle" fill="#161616">12/31/2017</text><text x="451.5" y="204.0" font-size="9" text-anchor="middle" fill="#161616">Year Ending</text><text x="451.5" y="215.0" font-size="9" text-anchor="middle" fill="#161616">12/31/2018</text><polyline points="85.4,191.8 176.9,191.8 268.5,191.8 360.0,191.8 451.5,191.8" fill="none" stroke="#3a7d95" stroke-width="1.9" stroke-opacity=".92" stroke-linejoin="round"/><circle cx="85.4" cy="191.8" r="2.55" fill="#fff" stroke="#3a7d95" stroke-width="1"/><circle cx="176.9" cy="191.8" r="2.55" fill="#fff" stroke="#3a7d95" stroke-width="1"/><circle cx="268.5" cy="191.8" r="2.55" fill="#fff" stroke="#3a7d95" stroke-width="1"/><circle cx="360.0" cy="191.8" r="2.55" fill="#fff" stroke="#3a7d95" stroke-width="1"/><circle cx="451.5" cy="191.8" r="2.55" fill="#fff" stroke="#3a7d95" stroke-width="1"/><polyline points="85.4,191.8 176.9,191.8 268.5,191.8 360.0,191.8 451.5,191.8" fill="none" stroke="#cc4a6c" stroke-width="1.9" stroke-opacity=".92" stroke-linejoin="round"/><circle cx="85.4" cy="191.8" r="2.55" fill="#fff" stroke="#cc4a6c" stroke-width="1"/><circle cx="176.9" cy="191.8" r="2.55" fill="#fff" stroke="#cc4a6c" stroke-width="1"/><circle cx="268.5" cy="191.8" r="2.55" fill="#fff" stroke="#cc4a6c" stroke-width="1"/><circle cx="360.0" cy="191.8" r="2.55" fill="#fff" stroke="#cc4a6c" stroke-width="1"/><circle cx="451.5" cy="191.8" r="2.55" fill="#fff" stroke="#cc4a6c" stroke-width="1"/><polyline points="85.4,180.5 176.9,179.5 268.5,178.5 360.0,179.5 451.5,178.5" fill="none" stroke="#e8804f" stroke-width="1.9" stroke-opacity=".92" stroke-linejoin="round"/><circle cx="85.4" cy="180.5" r="2.55" fill="#fff" stroke="#e8804f" stroke-width="1"/><circle cx="176.9" cy="179.5" r="2.55" fill="#fff" stroke="#e8804f" stroke-width="1"/><circle cx="268.5" cy="178.5" r="2.55" fill="#fff" stroke="#e8804f" stroke-width="1"/><circle cx="360.0" cy="179.5" r="2.55" fill="#fff" stroke="#e8804f" stroke-width="1"/><circle cx="451.5" cy="178.5" r="2.55" fill="#fff" stroke="#e8804f" stroke-width="1"/><polyline points="85.4,164.8 176.9,164.8 268.5,163.2 360.0,167.8 451.5,163.2" fill="none" stroke="#5cc2bd" stroke-width="1.9" stroke-opacity=".92" stroke-linejoin="round"/><circle cx="85.4" cy="164.8" r="2.55" fill="#fff" stroke="#5cc2bd" stroke-width="1"/><circle cx="176.9" cy="164.8" r="2.55" fill="#fff" stroke="#5cc2bd" stroke-width="1"/><circle cx="268.5" cy="163.2" r="2.55" fill="#fff" stroke="#5cc2bd" stroke-width="1"/><circle cx="360.0" cy="167.8" r="2.55" fill="#fff" stroke="#5cc2bd" stroke-width="1"/><circle cx="451.5" cy="163.2" r="2.55" fill="#fff" stroke="#5cc2bd" stroke-width="1"/><polyline points="85.4,167.8 176.9,165.8 268.5,162.5 360.0,165.8 451.5,164.8" fill="none" stroke="#efb04e" stroke-width="1.9" stroke-opacity=".92" stroke-linejoin="round"/><circle cx="85.4" cy="167.8" r="2.55" fill="#fff" stroke="#efb04e" stroke-width="1"/><circle cx="176.9" cy="165.8" r="2.55" fill="#fff" stroke="#efb04e" stroke-width="1"/><circle cx="268.5" cy="162.5" r="2.55" fill="#fff" stroke="#efb04e" stroke-width="1"/><circle cx="360.0" cy="165.8" r="2.55" fill="#fff" stroke="#efb04e" stroke-width="1"/><circle cx="451.5" cy="164.8" r="2.55" fill="#fff" stroke="#efb04e" stroke-width="1"/><polyline points="85.4,146.8 176.9,146.2 268.5,143.5 360.0,146.2 451.5,143.5" fill="none" stroke="#8fd2e2" stroke-width="1.9" stroke-opacity=".92" stroke-linejoin="round"/><circle cx="85.4" cy="146.8" r="2.55" fill="#fff" stroke="#8fd2e2" stroke-width="1"/><circle cx="176.9" cy="146.2" r="2.55" fill="#fff" stroke="#8fd2e2" stroke-width="1"/><circle cx="268.5" cy="143.5" r="2.55" fill="#fff" stroke="#8fd2e2" stroke-width="1"/><circle cx="360.0" cy="146.2" r="2.55" fill="#fff" stroke="#8fd2e2" stroke-width="1"/><circle cx="451.5" cy="143.5" r="2.55" fill="#fff" stroke="#8fd2e2" stroke-width="1"/><polyline points="85.4,83.1 176.9,80.4 268.5,72.4 360.0,83.1 451.5,75.1" fill="none" stroke="#c3d755" stroke-width="1.9" stroke-opacity=".92" stroke-linejoin="round"/><circle cx="85.4" cy="83.1" r="2.55" fill="#fff" stroke="#c3d755" stroke-width="1"/><circle cx="176.9" cy="80.4" r="2.55" fill="#fff" stroke="#c3d755" stroke-width="1"/><circle cx="268.5" cy="72.4" r="2.55" fill="#fff" stroke="#c3d755" stroke-width="1"/><circle cx="360.0" cy="83.1" r="2.55" fill="#fff" stroke="#c3d755" stroke-width="1"/><circle cx="451.5" cy="75.1" r="2.55" fill="#fff" stroke="#c3d755" stroke-width="1"/><rect x="473.0" y="73.5" width="123.3" height="114.4" fill="#d3d3d3"/><rect x="471.5" y="72.0" width="123.3" height="114.4" fill="#fff" stroke="#dadada" stroke-width="1"/><line x1="478.0" y1="82.8" x2="488.0" y2="82.8" stroke="#c3d755" stroke-width="1.1"/><circle cx="483.0" cy="82.8" r="3" fill="#fff" stroke="#c3d755" stroke-width="0.95"/><text x="492.5" y="86.0" font-size="9" fill="#1a1a1a">Total Expenses</text><line x1="478.0" y1="98.6" x2="488.0" y2="98.6" stroke="#5cc2bd" stroke-width="1.1"/><circle cx="483.0" cy="98.6" r="3" fill="#fff" stroke="#5cc2bd" stroke-width="0.95"/><text x="492.5" y="101.8" font-size="9" fill="#1a1a1a">Personnel</text><line x1="478.0" y1="113.7" x2="488.0" y2="113.7" stroke="#efb04e" stroke-width="1.1"/><circle cx="483.0" cy="113.7" r="3" fill="#fff" stroke="#efb04e" stroke-width="0.95"/><text x="492.5" y="116.9" font-size="9" fill="#1a1a1a">Professional Fees</text><line x1="478.0" y1="128.8" x2="488.0" y2="128.8" stroke="#e8804f" stroke-width="1.1"/><circle cx="483.0" cy="128.8" r="3" fill="#fff" stroke="#e8804f" stroke-width="0.95"/><text x="492.5" y="132.0" font-size="9" fill="#1a1a1a">Occupancy</text><line x1="478.0" y1="144.5" x2="488.0" y2="144.5" stroke="#3a7d95" stroke-width="1.1"/><circle cx="483.0" cy="144.5" r="3" fill="#fff" stroke="#3a7d95" stroke-width="0.95"/><text x="492.5" y="147.7" font-size="9" fill="#1a1a1a">Pass Through</text><line x1="478.0" y1="159.6" x2="488.0" y2="159.6" stroke="#cc4a6c" stroke-width="1.1"/><circle cx="483.0" cy="159.6" r="3" fill="#fff" stroke="#cc4a6c" stroke-width="0.95"/><text x="492.5" y="162.8" font-size="9" fill="#1a1a1a">Interest</text><line x1="478.0" y1="174.6" x2="488.0" y2="174.6" stroke="#8fd2e2" stroke-width="1.1"/><circle cx="483.0" cy="174.6" r="3" fill="#fff" stroke="#8fd2e2" stroke-width="0.95"/><text x="492.5" y="177.8" font-size="9" fill="#1a1a1a">Additional Expenses</text><g transform="translate(583.2,56.2)"><rect x="0.5" y="0.5" width="16" height="16" rx="2" fill="#dcdcdc" stroke="#c4c4c4"/><path d="M8.5 3V10.4M5.8 8L8.5 10.8L11.2 8" fill="none" stroke="#8a8a8a" stroke-width="1.1"/><path d="M3.6 10.4V13.2H13.4V10.4" fill="none" stroke="#8a8a8a" stroke-width="1.1"/></g></svg></div><div class="panel" style="left:1259px;top:260px;width:617.7px;height:237.7px"><svg class="chev" width="11" height="7" viewBox="0 0 11 7" fill="none" stroke="#222" stroke-width="1.1" stroke-linecap="round" stroke-linejoin="round"><path d="M0.800 1.400L5.300 5.900L9.800 1.400"/></svg><h3>Trend Cash (in Thousands)</h3><div class="ts">02/03/2023 12:30:54</div><svg class="tools" viewBox="0 0 99 16" width="99" height="16" fill="none" stroke="#444" stroke-width="1" stroke-linecap="round" stroke-linejoin="round"><path d="M0.6 1H12.8L8.1 6.9V11.4L5.3 13V6.9Z" stroke="#d2d6d9"/><g transform="translate(17,1.5)"><path d="M0.7 12.3L1.3 9.1L9.2 1.2a1.5 1.5 0 0 1 2.1 0l0.5 0.5a1.5 1.5 0 0 1 0 2.1L3.9 11.7Z"/><path d="M1.3 9.1L3.9 11.7M8 2.4L10.600 5" /><path d="M0.7 12.3L2.5 12L1 10.500Z" fill="#444"/></g><g transform="translate(34.5,2)"><path d="M1 5.2A5.600 5.600 0 0 1 11.600 3.400"/><path d="M12 0.600V3.800H8.800"/><path d="M12 7.600A5.600 5.600 0 0 1 1.400 9.400"/><path d="M1 12.200V9H4.200"/></g><g transform="translate(51.3,1)"><circle cx="5.700" cy="5.700" r="5"/><path d="M9.300 9.300L12.500 12.500"/></g><g transform="translate(75.1,8)"><path d="M-1.45 -4.47L-1.25 -6.18A6.3 6.3 0 0 1 1.25 -6.18L1.45 -4.47A4.7 4.7 0 0 1 3.14 -3.49L3.14 -3.49L4.73 -4.17A6.3 6.3 0 0 1 5.97 -2.01L4.60 -0.98A4.7 4.7 0 0 1 4.60 0.98L4.60 0.98L5.97 2.01A6.3 6.3 0 0 1 4.73 4.17L3.14 3.49A4.7 4.7 0 0 1 1.45 4.47L1.45 4.47L1.25 6.18A6.3 6.3 0 0 1 -1.25 6.18L-1.45 4.47A4.7 4.7 0 0 1 -3.14 3.49L-3.14 3.49L-4.73 4.17A6.3 6.3 0 0 1 -5.97 2.01L-4.60 0.98A4.7 4.7 0 0 1 -4.60 -0.98L-4.60 -0.98L-5.97 -2.01A6.3 6.3 0 0 1 -4.73 -4.17L-3.14 -3.49A4.7 4.7 0 0 1 -1.45 -4.47Z"/><circle cx="0" cy="0" r="2.2"/></g><g transform="translate(85.7,1)" stroke-width="0.9"><path d="M0.400 2.600H10.800M3.600 2.400V1.200a0.600 0.600 0 0 1 .6-.6H7a0.600 0.600 0 0 1 .6 .6V2.400"/><path d="M1.400 2.800V12.600a0.800 0.800 0 0 0 .8 .8H9a0.800 0.800 0 0 0 .8-.8V2.800"/><path d="M3.600 4.600V11.600M5.600 4.600V11.600M7.600 4.600V11.600" stroke-width="0.8"/></g></svg><div class="sep" style="top:49px"></div><div class="body" style="top:50px;bottom:7.5px"></div><svg class="abs" style="left:0;top:0" width="618" height="239" viewBox="0 0 618 239"><rect x="65.1" y="63.3" width="522.2" height="127.8" fill="#fff"/><rect x="65.1" y="88.9" width="522.2" height="26.8" fill="#f4f4f4"/><rect x="65.1" y="140.0" width="522.2" height="26.8" fill="#f4f4f4"/><line x1="117.1" y1="63.3" x2="117.1" y2="191.1" stroke="#e4e4e4" stroke-width="1"/><line x1="163.5" y1="63.3" x2="163.5" y2="191.1" stroke="#e4e4e4" stroke-width="1"/><line x1="209.8" y1="63.3" x2="209.8" y2="191.1" stroke="#e4e4e4" stroke-width="1"/><line x1="256.2" y1="63.3" x2="256.2" y2="191.1" stroke="#e4e4e4" stroke-width="1"/><line x1="302.6" y1="63.3" x2="302.6" y2="191.1" stroke="#e4e4e4" stroke-width="1"/><line x1="349.0" y1="63.3" x2="349.0" y2="191.1" stroke="#e4e4e4" stroke-width="1"/><line x1="395.4" y1="63.3" x2="395.4" y2="191.1" stroke="#e4e4e4" stroke-width="1"/><line x1="441.7" y1="63.3" x2="441.7" y2="191.1" stroke="#e4e4e4" stroke-width="1"/><line x1="488.1" y1="63.3" x2="488.1" y2="191.1" stroke="#e4e4e4" stroke-width="1"/><line x1="534.5" y1="63.3" x2="534.5" y2="191.1" stroke="#e4e4e4" stroke-width="1"/><rect x="65.1" y="63.3" width="522.2" height="127.8" fill="none" stroke="#ebebeb" stroke-width="1"/><text x="60.1" y="67.0" font-size="9" text-anchor="end" fill="#161616">$11,000</text><text x="60.1" y="93.0" font-size="9" text-anchor="end" fill="#161616">$8,800</text><text x="60.1" y="118.0" font-size="9" text-anchor="end" fill="#161616">$6,600</text><text x="60.1" y="144.0" font-size="9" text-anchor="end" fill="#161616">$4,400</text><text x="60.1" y="169.0" font-size="9" text-anchor="end" fill="#161616">$2,200</text><text x="60.1" y="194.0" font-size="9" text-anchor="end" fill="#161616">$0</text><text x="70.7" y="203.0" font-size="9" text-anchor="middle" fill="#161616">01/31/20</text><text x="70.7" y="214.0" font-size="9" text-anchor="middle" fill="#161616">18</text><text x="117.1" y="203.0" font-size="9" text-anchor="middle" fill="#161616">02/28/20</text><text x="117.1" y="214.0" font-size="9" text-anchor="middle" fill="#161616">18</text><text x="163.5" y="203.0" font-size="9" text-anchor="middle" fill="#161616">03/31/20</text><text x="163.5" y="214.0" font-size="9" text-anchor="middle" fill="#161616">18</text><text x="209.8" y="203.0" font-size="9" text-anchor="middle" fill="#161616">04/30/20</text><text x="209.8" y="214.0" font-size="9" text-anchor="middle" fill="#161616">18</text><text x="256.2" y="203.0" font-size="9" text-anchor="middle" fill="#161616">05/31/20</text><text x="256.2" y="214.0" font-size="9" text-anchor="middle" fill="#161616">18</text><text x="302.6" y="203.0" font-size="9" text-anchor="middle" fill="#161616">06/30/20</text><text x="302.6" y="214.0" font-size="9" text-anchor="middle" fill="#161616">18</text><text x="349.0" y="203.0" font-size="9" text-anchor="middle" fill="#161616">07/31/20</text><text x="349.0" y="214.0" font-size="9" text-anchor="middle" fill="#161616">18</text><text x="395.4" y="203.0" font-size="9" text-anchor="middle" fill="#161616">08/31/20</text><text x="395.4" y="214.0" font-size="9" text-anchor="middle" fill="#161616">18</text><text x="441.7" y="203.0" font-size="9" text-anchor="middle" fill="#161616">09/30/20</text><text x="441.7" y="214.0" font-size="9" text-anchor="middle" fill="#161616">18</text><text x="488.1" y="203.0" font-size="9" text-anchor="middle" fill="#161616">10/31/20</text><text x="488.1" y="214.0" font-size="9" text-anchor="middle" fill="#161616">18</text><text x="534.5" y="203.0" font-size="9" text-anchor="middle" fill="#161616">11/30/20</text><text x="534.5" y="214.0" font-size="9" text-anchor="middle" fill="#161616">18</text><text x="580.9" y="203.0" font-size="9" text-anchor="middle" fill="#161616">12/31/20</text><text x="580.9" y="214.0" font-size="9" text-anchor="middle" fill="#161616">18</text><polyline points="70.7,89.4 117.1,85.8 163.5,84.1 209.8,82.1 256.2,81.4 302.6,79.8 349.0,77.8 395.4,77.8 441.7,75.8 488.1,74.1 534.5,73.1 580.9,72.4" fill="none" stroke="#c3d755" stroke-width="4" stroke-opacity=".92" stroke-linejoin="round"/><circle cx="70.7" cy="89.4" r="2.5" fill="#fff" stroke="#c3d755" stroke-width="1"/><circle cx="117.1" cy="85.8" r="2.5" fill="#fff" stroke="#c3d755" stroke-width="1"/><circle cx="163.5" cy="84.1" r="2.5" fill="#fff" stroke="#c3d755" stroke-width="1"/><circle cx="209.8" cy="82.1" r="2.5" fill="#fff" stroke="#c3d755" stroke-width="1"/><circle cx="256.2" cy="81.4" r="2.5" fill="#fff" stroke="#c3d755" stroke-width="1"/><circle cx="302.6" cy="79.8" r="2.5" fill="#fff" stroke="#c3d755" stroke-width="1"/><circle cx="349.0" cy="77.8" r="2.5" fill="#fff" stroke="#c3d755" stroke-width="1"/><circle cx="395.4" cy="77.8" r="2.5" fill="#fff" stroke="#c3d755" stroke-width="1"/><circle cx="441.7" cy="75.8" r="2.5" fill="#fff" stroke="#c3d755" stroke-width="1"/><circle cx="488.1" cy="74.1" r="2.5" fill="#fff" stroke="#c3d755" stroke-width="1"/><circle cx="534.5" cy="73.1" r="2.5" fill="#fff" stroke="#c3d755" stroke-width="1"/><circle cx="580.9" cy="72.4" r="2.5" fill="#fff" stroke="#c3d755" stroke-width="1"/><g transform="translate(583.2,55.7)"><rect x="0.5" y="0.5" width="16" height="16" rx="2" fill="#dcdcdc" stroke="#c4c4c4"/><path d="M8.5 3V10.4M5.8 8L8.5 10.8L11.2 8" fill="none" stroke="#8a8a8a" stroke-width="1.1"/><path d="M3.6 10.4V13.2H13.4V10.4" fill="none" stroke="#8a8a8a" stroke-width="1.1"/></g></svg></div><div class="panel" style="left:1259px;top:509px;width:617.7px;height:237.7px"><svg class="chev" width="11" height="7" viewBox="0 0 11 7" fill="none" stroke="#222" stroke-width="1.1" stroke-linecap="round" stroke-linejoin="round"><path d="M0.800 1.400L5.300 5.900L9.800 1.400"/></svg><h3>Contributed Revenue</h3><div class="ts">02/03/2023 12:30:54</div><svg class="tools" viewBox="0 0 99 16" width="99" height="16" fill="none" stroke="#444" stroke-width="1" stroke-linecap="round" stroke-linejoin="round"><path d="M0.6 1H12.8L8.1 6.9V11.4L5.3 13V6.9Z" stroke="#d2d6d9"/><g transform="translate(17,1.5)"><path d="M0.7 12.3L1.3 9.1L9.2 1.2a1.5 1.5 0 0 1 2.1 0l0.5 0.5a1.5 1.5 0 0 1 0 2.1L3.9 11.7Z"/><path d="M1.3 9.1L3.9 11.7M8 2.4L10.600 5" /><path d="M0.7 12.3L2.5 12L1 10.500Z" fill="#444"/></g><g transform="translate(34.5,2)"><path d="M1 5.2A5.600 5.600 0 0 1 11.600 3.400"/><path d="M12 0.600V3.800H8.800"/><path d="M12 7.600A5.600 5.600 0 0 1 1.400 9.400"/><path d="M1 12.200V9H4.200"/></g><g transform="translate(51.3,1)"><circle cx="5.700" cy="5.700" r="5"/><path d="M9.300 9.300L12.500 12.500"/></g><g transform="translate(75.1,8)"><path d="M-1.45 -4.47L-1.25 -6.18A6.3 6.3 0 0 1 1.25 -6.18L1.45 -4.47A4.7 4.7 0 0 1 3.14 -3.49L3.14 -3.49L4.73 -4.17A6.3 6.3 0 0 1 5.97 -2.01L4.60 -0.98A4.7 4.7 0 0 1 4.60 0.98L4.60 0.98L5.97 2.01A6.3 6.3 0 0 1 4.73 4.17L3.14 3.49A4.7 4.7 0 0 1 1.45 4.47L1.45 4.47L1.25 6.18A6.3 6.3 0 0 1 -1.25 6.18L-1.45 4.47A4.7 4.7 0 0 1 -3.14 3.49L-3.14 3.49L-4.73 4.17A6.3 6.3 0 0 1 -5.97 2.01L-4.60 0.98A4.7 4.7 0 0 1 -4.60 -0.98L-4.60 -0.98L-5.97 -2.01A6.3 6.3 0 0 1 -4.73 -4.17L-3.14 -3.49A4.7 4.7 0 0 1 -1.45 -4.47Z"/><circle cx="0" cy="0" r="2.2"/></g><g transform="translate(85.7,1)" stroke-width="0.9"><path d="M0.400 2.600H10.800M3.600 2.400V1.200a0.600 0.600 0 0 1 .6-.6H7a0.600 0.600 0 0 1 .6 .6V2.400"/><path d="M1.400 2.800V12.600a0.800 0.800 0 0 0 .8 .8H9a0.800 0.800 0 0 0 .8-.8V2.800"/><path d="M3.600 4.600V11.600M5.600 4.600V11.600M7.600 4.600V11.600" stroke-width="0.8"/></g></svg><div class="sep" style="top:49px"></div><div class="body" style="top:50px;bottom:7.5px"></div><svg class="abs" style="left:0;top:0" width="618" height="239" viewBox="0 0 618 239"><rect x="79.4" y="63.5" width="321.3" height="127.7" fill="#fff"/><rect x="79.4" y="89.0" width="321.3" height="26.7" fill="#f4f4f4"/><rect x="79.4" y="140.1" width="321.3" height="26.7" fill="#f4f4f4"/><line x1="162.8" y1="63.5" x2="162.8" y2="191.2" stroke="#e4e4e4" stroke-width="1"/><line x1="240.2" y1="63.5" x2="240.2" y2="191.2" stroke="#e4e4e4" stroke-width="1"/><line x1="317.6" y1="63.5" x2="317.6" y2="191.2" stroke="#e4e4e4" stroke-width="1"/><rect x="79.4" y="63.5" width="321.3" height="127.7" fill="none" stroke="#ebebeb" stroke-width="1"/><text x="74.4" y="67.0" font-size="9" text-anchor="end" fill="#161616">$3,000,000</text><text x="74.4" y="93.0" font-size="9" text-anchor="end" fill="#161616">$2,400,000</text><text x="74.4" y="118.0" font-size="9" text-anchor="end" fill="#161616">$1,800,000</text><text x="74.4" y="144.0" font-size="9" text-anchor="end" fill="#161616">$1,200,000</text><text x="74.4" y="169.0" font-size="9" text-anchor="end" fill="#161616">$600,000</text><text x="74.4" y="194.0" font-size="9" text-anchor="end" fill="#161616">$0</text><text x="85.4" y="203.0" font-size="9" text-anchor="middle" fill="#161616">Year Ending</text><text x="85.4" y="214.0" font-size="9" text-anchor="middle" fill="#161616">12/31/2014</text><text x="162.8" y="203.0" font-size="9" text-anchor="middle" fill="#161616">Year Ending</text><text x="162.8" y="214.0" font-size="9" text-anchor="middle" fill="#161616">12/31/2015</text><text x="240.2" y="203.0" font-size="9" text-anchor="middle" fill="#161616">Year Ending</text><text x="240.2" y="214.0" font-size="9" text-anchor="middle" fill="#161616">12/31/2016</text><text x="317.6" y="203.0" font-size="9" text-anchor="middle" fill="#161616">Year Ending</text><text x="317.6" y="214.0" font-size="9" text-anchor="middle" fill="#161616">12/31/2017</text><text x="394.9" y="203.0" font-size="9" text-anchor="middle" fill="#161616">Year Ending</text><text x="394.9" y="214.0" font-size="9" text-anchor="middle" fill="#161616">12/31/2018</text><polyline points="85.4,191.2 162.8,191.2 240.2,191.2 317.6,191.2 394.9,191.2" fill="none" stroke="#c3d755" stroke-width="1.9" stroke-opacity=".92" stroke-linejoin="round"/><circle cx="85.4" cy="191.2" r="2.55" fill="#fff" stroke="#c3d755" stroke-width="1"/><circle cx="162.8" cy="191.2" r="2.55" fill="#fff" stroke="#c3d755" stroke-width="1"/><circle cx="240.2" cy="191.2" r="2.55" fill="#fff" stroke="#c3d755" stroke-width="1"/><circle cx="317.6" cy="191.2" r="2.55" fill="#fff" stroke="#c3d755" stroke-width="1"/><circle cx="394.9" cy="191.2" r="2.55" fill="#fff" stroke="#c3d755" stroke-width="1"/><polyline points="85.4,191.2 162.8,191.2 240.2,191.2 317.6,191.2 394.9,191.2" fill="none" stroke="#5cc2bd" stroke-width="1.9" stroke-opacity=".92" stroke-linejoin="round"/><circle cx="85.4" cy="191.2" r="2.55" fill="#fff" stroke="#5cc2bd" stroke-width="1"/><circle cx="162.8" cy="191.2" r="2.55" fill="#fff" stroke="#5cc2bd" stroke-width="1"/><circle cx="240.2" cy="191.2" r="2.55" fill="#fff" stroke="#5cc2bd" stroke-width="1"/><circle cx="317.6" cy="191.2" r="2.55" fill="#fff" stroke="#5cc2bd" stroke-width="1"/><circle cx="394.9" cy="191.2" r="2.55" fill="#fff" stroke="#5cc2bd" stroke-width="1"/><polyline points="85.4,191.2 162.8,191.2 240.2,191.2 317.6,191.2 394.9,191.2" fill="none" stroke="#efb04e" stroke-width="1.9" stroke-opacity=".92" stroke-linejoin="round"/><circle cx="85.4" cy="191.2" r="2.55" fill="#fff" stroke="#efb04e" stroke-width="1"/><circle cx="162.8" cy="191.2" r="2.55" fill="#fff" stroke="#efb04e" stroke-width="1"/><circle cx="240.2" cy="191.2" r="2.55" fill="#fff" stroke="#efb04e" stroke-width="1"/><circle cx="317.6" cy="191.2" r="2.55" fill="#fff" stroke="#efb04e" stroke-width="1"/><circle cx="394.9" cy="191.2" r="2.55" fill="#fff" stroke="#efb04e" stroke-width="1"/><polyline points="85.4,191.2 162.8,191.2 240.2,191.2 317.6,191.2 394.9,191.2" fill="none" stroke="#e8804f" stroke-width="1.9" stroke-opacity=".92" stroke-linejoin="round"/><circle cx="85.4" cy="191.2" r="2.55" fill="#fff" stroke="#e8804f" stroke-width="1"/><circle cx="162.8" cy="191.2" r="2.55" fill="#fff" stroke="#e8804f" stroke-width="1"/><circle cx="240.2" cy="191.2" r="2.55" fill="#fff" stroke="#e8804f" stroke-width="1"/><circle cx="317.6" cy="191.2" r="2.55" fill="#fff" stroke="#e8804f" stroke-width="1"/><circle cx="394.9" cy="191.2" r="2.55" fill="#fff" stroke="#e8804f" stroke-width="1"/><polyline points="85.4,178.5 162.8,182.2 240.2,182.2 317.6,183.2 394.9,182.2" fill="none" stroke="#cc4a6c" stroke-width="1.9" stroke-opacity=".92" stroke-linejoin="round"/><circle cx="85.4" cy="178.5" r="2.55" fill="#fff" stroke="#cc4a6c" stroke-width="1"/><circle cx="162.8" cy="182.2" r="2.55" fill="#fff" stroke="#cc4a6c" stroke-width="1"/><circle cx="240.2" cy="182.2" r="2.55" fill="#fff" stroke="#cc4a6c" stroke-width="1"/><circle cx="317.6" cy="183.2" r="2.55" fill="#fff" stroke="#cc4a6c" stroke-width="1"/><circle cx="394.9" cy="182.2" r="2.55" fill="#fff" stroke="#cc4a6c" stroke-width="1"/><polyline points="85.4,81.4 162.8,100.4 240.2,68.1 317.6,97.8 394.9,71.7" fill="none" stroke="#3a7d95" stroke-width="1.9" stroke-opacity=".92" stroke-linejoin="round"/><circle cx="85.4" cy="81.4" r="2.55" fill="#fff" stroke="#3a7d95" stroke-width="1"/><circle cx="162.8" cy="100.4" r="2.55" fill="#fff" stroke="#3a7d95" stroke-width="1"/><circle cx="240.2" cy="68.1" r="2.55" fill="#fff" stroke="#3a7d95" stroke-width="1"/><circle cx="317.6" cy="97.8" r="2.55" fill="#fff" stroke="#3a7d95" stroke-width="1"/><circle cx="394.9" cy="71.7" r="2.55" fill="#fff" stroke="#3a7d95" stroke-width="1"/><rect x="412.3" y="80.3" width="184.0" height="98.2" fill="#d3d3d3"/><rect x="410.8" y="78.8" width="184.0" height="98.2" fill="#fff" stroke="#dadada" stroke-width="1"/><line x1="416.8" y1="89.8" x2="426.8" y2="89.8" stroke="#c3d755" stroke-width="1.1"/><circle cx="421.8" cy="89.8" r="3" fill="#fff" stroke="#c3d755" stroke-width="0.95"/><text x="431.4" y="93.0" font-size="9" fill="#1a1a1a">Federated Campaigns</text><line x1="416.8" y1="104.8" x2="426.8" y2="104.8" stroke="#5cc2bd" stroke-width="1.1"/><circle cx="421.8" cy="104.8" r="3" fill="#fff" stroke="#5cc2bd" stroke-width="0.95"/><text x="431.4" y="108.0" font-size="9" fill="#1a1a1a">Government Grants</text><line x1="416.8" y1="119.8" x2="426.8" y2="119.8" stroke="#efb04e" stroke-width="1.1"/><circle cx="421.8" cy="119.8" r="3" fill="#fff" stroke="#efb04e" stroke-width="0.95"/><text x="431.4" y="123.0" font-size="9" fill="#1a1a1a">Related Organization</text><line x1="416.8" y1="134.9" x2="426.8" y2="134.9" stroke="#e8804f" stroke-width="1.1"/><circle cx="421.8" cy="134.9" r="3" fill="#fff" stroke="#e8804f" stroke-width="0.95"/><text x="431.4" y="138.1" font-size="9" fill="#1a1a1a">Fundraising Events</text><line x1="416.8" y1="150.5" x2="426.8" y2="150.5" stroke="#3a7d95" stroke-width="1.1"/><circle cx="421.8" cy="150.5" r="3" fill="#fff" stroke="#3a7d95" stroke-width="0.95"/><text x="431.4" y="153.7" font-size="9" fill="#1a1a1a">All other grants and contributions</text><line x1="416.8" y1="165.6" x2="426.8" y2="165.6" stroke="#cc4a6c" stroke-width="1.1"/><circle cx="421.8" cy="165.6" r="3" fill="#fff" stroke="#cc4a6c" stroke-width="0.95"/><text x="431.4" y="168.8" font-size="9" fill="#1a1a1a">Membership dues</text><g transform="translate(583.2,55.5)"><rect x="0.5" y="0.5" width="16" height="16" rx="2" fill="#dcdcdc" stroke="#c4c4c4"/><path d="M8.5 3V10.4M5.8 8L8.5 10.8L11.2 8" fill="none" stroke="#8a8a8a" stroke-width="1.1"/><path d="M3.6 10.4V13.2H13.4V10.4" fill="none" stroke="#8a8a8a" stroke-width="1.1"/></g></svg></div>
</div>
</body></html>
